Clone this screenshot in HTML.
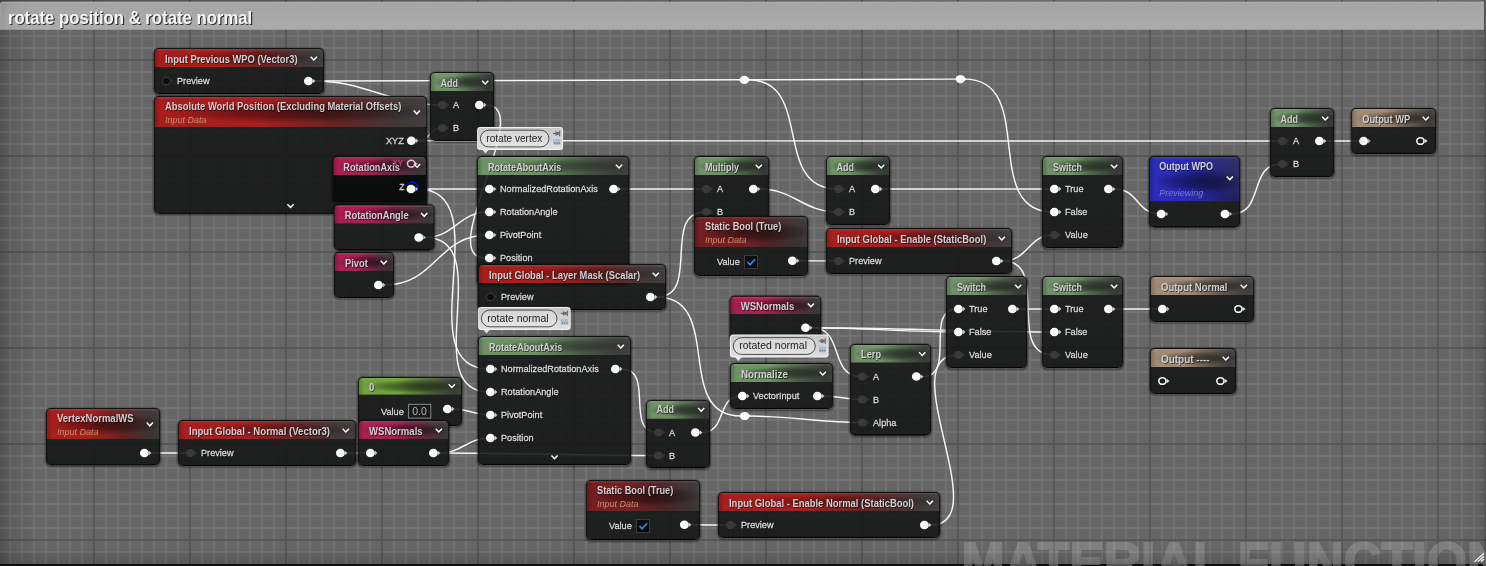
<!DOCTYPE html>
<html lang="en"><head><meta charset="utf-8"><title>rotate position &amp; rotate normal</title>
<style>
html,body{margin:0;padding:0;background:#666;overflow:hidden}
body{width:1486px;height:566px;position:relative}
svg{position:absolute;left:0;top:0;display:block;will-change:transform}
text{font-family:"Liberation Sans",sans-serif;white-space:pre}
</style></head><body>
<svg width="1486" height="566" viewBox="0 0 1486 566">
<defs>
<pattern id="minor" x="9" y="11" width="12" height="12" patternUnits="userSpaceOnUse">
<rect x="0" y="0" width="12" height="12" fill="#666666"/>
<rect x="0" y="0" width="2" height="12" fill="#727272"/><rect x="0" y="0" width="12" height="2" fill="#727272"/>
</pattern>
<pattern id="major" x="93" y="59" width="96" height="96" patternUnits="userSpaceOnUse">
<rect x="0" y="0" width="2" height="96" fill="#565656"/><rect x="0" y="0" width="96" height="2" fill="#565656"/>
</pattern>
<filter id="noop" x="0" y="0" width="1486" height="566" filterUnits="userSpaceOnUse"><feOffset dx="0" dy="0"/></filter>
<linearGradient id="bodyg" x1="0" y1="0" x2="0" y2="1"><stop offset="0" stop-color="#151716" stop-opacity="0.87"/><stop offset="1" stop-color="#121413" stop-opacity="0.87"/></linearGradient>
<linearGradient id="hdrshade" x1="0" y1="0" x2="0" y2="1"><stop offset="0" stop-color="#fff" stop-opacity="0.07"/><stop offset="0.45" stop-color="#000" stop-opacity="0"/><stop offset="1" stop-color="#000" stop-opacity="0.2"/></linearGradient>
<linearGradient id="hdrleft" x1="0" y1="0" x2="1" y2="0"><stop offset="0" stop-color="#000" stop-opacity="0.25"/><stop offset="1" stop-color="#000" stop-opacity="0"/></linearGradient>
<linearGradient id="leftv" x1="0" y1="0" x2="1" y2="0"><stop offset="0" stop-color="#000" stop-opacity="0.2"/><stop offset="0.3" stop-color="#000" stop-opacity="0.08"/><stop offset="1" stop-color="#000" stop-opacity="0"/></linearGradient>
<linearGradient id="topv" x1="0" y1="0" x2="1" y2="0"><stop offset="0" stop-color="#000" stop-opacity="0.3"/><stop offset="0.5" stop-color="#000" stop-opacity="0.12"/><stop offset="1" stop-color="#000" stop-opacity="0.03"/></linearGradient>
<linearGradient id="rightv" x1="0" y1="0" x2="1" y2="0"><stop offset="0" stop-color="#000" stop-opacity="0"/><stop offset="1" stop-color="#000" stop-opacity="0.08"/></linearGradient>
<linearGradient id="bubg" x1="0" y1="0" x2="0" y2="1"><stop offset="0" stop-color="#c6c6c6"/><stop offset="1" stop-color="#e0e0e0"/></linearGradient>
<linearGradient id="botv" x1="0" y1="0" x2="0" y2="1"><stop offset="0" stop-color="#000" stop-opacity="0"/><stop offset="1" stop-color="#000" stop-opacity="0.14"/></linearGradient>
<linearGradient id="titleg" x1="0" y1="0" x2="0" y2="1"><stop offset="0" stop-color="#a4a4a4"/><stop offset="1" stop-color="#acacac"/></linearGradient>
</defs>
<g filter="url(#noop)">
<rect width="1486" height="566" fill="url(#minor)"/>
<rect width="1486" height="566" fill="url(#major)"/>
<rect x="0" y="0" width="40" height="566" fill="url(#leftv)"/>
<rect x="1456" y="0" width="30" height="566" fill="url(#rightv)"/>

<g opacity="0.17"><text x="961.4" y="579.6" font-size="54.5" font-weight="bold" fill="#fff" stroke="#fff" stroke-width="1.9" stroke-linejoin="miter" textLength="543" lengthAdjust="spacingAndGlyphs">MATERIAL FUNCTION</text></g>
<rect x="0" y="548" width="1486" height="16" fill="url(#botv)"/>
<rect x="0" y="563.9" width="1486" height="3" fill="#0e0e0e"/>
<clipPath id="botc"><rect x="0" y="563.9" width="1486" height="3"/></clipPath>
<g clip-path="url(#botc)"><text x="961.4" y="579.6" font-size="54.5" font-weight="bold" fill="#525252" stroke="#525252" stroke-width="1.9" stroke-linejoin="miter" textLength="543" lengthAdjust="spacingAndGlyphs">MATERIAL FUNCTION</text></g>
<rect x="1484" y="0" width="2" height="563.9" fill="#000" opacity="0.13"/>
<rect x="0" y="0" width="1486" height="1.7" fill="url(#topv)"/>
<path d="M0 29.8 V3.7 Q0 1.7 2 1.7 H1484 V29.8Z" fill="url(#titleg)"/>
<rect x="2" y="1.7" width="1482" height="1" fill="#b8b8b8" opacity="0.6"/>
<rect x="0" y="3.5" width="1" height="26.3" fill="#b0b0b0"/>
<rect x="0" y="1.7" width="30" height="28.1" fill="url(#leftv)" opacity="0.5"/>
<text x="9.0" y="24.7" font-size="18.6" font-weight="bold" fill="#262626" opacity="0.9" textLength="244.3" lengthAdjust="spacingAndGlyphs">rotate position &amp; rotate normal</text>
<text x="7.9" y="23.7" font-size="18.6" font-weight="bold" fill="#f4f4f4" textLength="244.3" lengthAdjust="spacingAndGlyphs">rotate position &amp; rotate normal</text>
<path d="M315.0 81.0 C457.2 81.0 598.1 79.8 740.3 79.8" stroke="#f6f6f6" stroke-width="1.45" fill="none"/>
<path d="M748.3 79.8 C817.9 79.8 886.8 79.1 956.4 79.1" stroke="#f6f6f6" stroke-width="1.45" fill="none"/>
<path d="M748.3 79.8 C814.3 79.8 771.2 189.0 837.2 189.0" stroke="#f6f6f6" stroke-width="1.45" fill="none"/>
<path d="M964.4 79.1 C1038.3 79.1 979.3 212.0 1053.2 212.0" stroke="#f6f6f6" stroke-width="1.45" fill="none"/>
<path d="M315.0 81.0 C365.1 81.0 391.1 105.0 441.2 105.0" stroke="#f6f6f6" stroke-width="1.45" fill="none"/>
<path d="M418.0 140.8 C430.0 140.8 429.2 128.0 441.2 128.0" stroke="#f6f6f6" stroke-width="1.45" fill="none"/>
<path d="M418.0 140.8 C705.8 140.8 993.4 141.0 1281.2 141.0" stroke="#f6f6f6" stroke-width="1.45" fill="none"/>
<path d="M485.8 105.0 C537.0 105.0 434.0 258.0 485.2 258.0" stroke="#f6f6f6" stroke-width="1.45" fill="none"/>
<path d="M417.6 189.0 L488.2 189.0" stroke="#f6f6f6" stroke-width="1.45" fill="none"/>
<path d="M417.6 189.0 C501.5 189.0 405.3 369.0 489.2 369.0" stroke="#f6f6f6" stroke-width="1.45" fill="none"/>
<path d="M425.4 237.4 C454.8 237.4 458.8 212.0 488.2 212.0" stroke="#f6f6f6" stroke-width="1.45" fill="none"/>
<path d="M425.4 237.4 C498.2 237.4 416.4 392.0 489.2 392.0" stroke="#f6f6f6" stroke-width="1.45" fill="none"/>
<path d="M385.0 285.0 C436.1 285.0 437.1 235.0 488.2 235.0" stroke="#f6f6f6" stroke-width="1.45" fill="none"/>
<path d="M454.0 409.0 C467.7 409.0 475.5 415.0 489.2 415.0" stroke="#f6f6f6" stroke-width="1.45" fill="none"/>
<path d="M440.0 453.0 C461.4 453.0 467.8 438.0 489.2 438.0" stroke="#f6f6f6" stroke-width="1.45" fill="none"/>
<path d="M440.0 453.0 C513.2 453.0 584.0 455.5 657.2 455.5" stroke="#f6f6f6" stroke-width="1.45" fill="none"/>
<path d="M347.0 453.0 L369.2 453.0" stroke="#f6f6f6" stroke-width="1.45" fill="none"/>
<path d="M151.0 453.0 L189.2 453.0" stroke="#f6f6f6" stroke-width="1.45" fill="none"/>
<path d="M620.2 189.0 L705.2 189.0" stroke="#f6f6f6" stroke-width="1.45" fill="none"/>
<path d="M657.0 297.0 C701.4 297.0 660.8 212.0 705.2 212.0" stroke="#f6f6f6" stroke-width="1.45" fill="none"/>
<path d="M657.0 297.0 C724.5 297.0 673.1 416.0 740.6 416.0" stroke="#f6f6f6" stroke-width="1.45" fill="none"/>
<path d="M748.6 416.0 C788.3 416.0 821.5 422.6 861.2 422.6" stroke="#f6f6f6" stroke-width="1.45" fill="none"/>
<path d="M760.0 189.0 C793.4 189.0 803.8 212.0 837.2 212.0" stroke="#f6f6f6" stroke-width="1.45" fill="none"/>
<path d="M799.0 260.8 C811.8 260.8 824.4 261.0 837.2 261.0" stroke="#f6f6f6" stroke-width="1.45" fill="none"/>
<path d="M882.0 189.0 L1053.2 189.0" stroke="#f6f6f6" stroke-width="1.45" fill="none"/>
<path d="M1003.0 261.0 C1028.4 261.0 1027.8 235.0 1053.2 235.0" stroke="#f6f6f6" stroke-width="1.45" fill="none"/>
<path d="M1003.0 261.0 C1051.1 261.0 1005.1 355.0 1053.2 355.0" stroke="#f6f6f6" stroke-width="1.45" fill="none"/>
<path d="M1115.0 189.0 C1138.3 189.0 1136.7 214.0 1160.0 214.0" stroke="#f6f6f6" stroke-width="1.45" fill="none"/>
<path d="M1231.6 214.0 C1264.8 214.0 1248.0 164.0 1281.2 164.0" stroke="#f6f6f6" stroke-width="1.45" fill="none"/>
<path d="M1326.0 141.0 L1362.4 141.0" stroke="#f6f6f6" stroke-width="1.45" fill="none"/>
<path d="M622.0 369.0 C654.9 369.0 624.3 432.5 657.2 432.5" stroke="#f6f6f6" stroke-width="1.45" fill="none"/>
<path d="M702.0 432.5 C727.2 432.5 716.0 396.0 741.2 396.0" stroke="#f6f6f6" stroke-width="1.45" fill="none"/>
<path d="M824.0 396.0 C837.6 396.0 847.6 399.6 861.2 399.6" stroke="#f6f6f6" stroke-width="1.45" fill="none"/>
<path d="M812.1 327.8 C844.7 327.8 828.6 376.6 861.2 376.6" stroke="#f6f6f6" stroke-width="1.45" fill="none"/>
<path d="M812.1 327.8 C861.9 327.8 907.4 332.0 957.2 332.0" stroke="#f6f6f6" stroke-width="1.45" fill="none"/>
<path d="M812.1 327.8 C893.9 327.8 971.4 332.0 1053.2 332.0" stroke="#f6f6f6" stroke-width="1.45" fill="none"/>
<path d="M923.0 376.6 C956.9 376.6 923.3 309.0 957.2 309.0" stroke="#f6f6f6" stroke-width="1.45" fill="none"/>
<path d="M1019.0 309.0 L1053.2 309.0" stroke="#f6f6f6" stroke-width="1.45" fill="none"/>
<path d="M1115.0 309.0 L1161.2 309.0" stroke="#f6f6f6" stroke-width="1.45" fill="none"/>
<path d="M931.0 525.0 C996.4 525.0 891.8 355.0 957.2 355.0" stroke="#f6f6f6" stroke-width="1.45" fill="none"/>
<path d="M691.0 524.8 C703.8 524.8 716.4 525.0 729.2 525.0" stroke="#f6f6f6" stroke-width="1.45" fill="none"/>
<path d="M748.10 77.60 L750.50 79.80 L748.10 82.00Z" fill="#f0f0f0"/>
<ellipse cx="744.3" cy="79.8" rx="4.7" ry="4.1" fill="#fbfbfb"/>
<path d="M964.20 76.90 L966.60 79.10 L964.20 81.30Z" fill="#f0f0f0"/>
<ellipse cx="960.4" cy="79.1" rx="4.7" ry="4.1" fill="#fbfbfb"/>
<path d="M748.40 413.80 L750.80 416.00 L748.40 418.20Z" fill="#f0f0f0"/>
<ellipse cx="744.6" cy="416.0" rx="4.7" ry="4.1" fill="#fbfbfb"/>
<g>
<rect x="153.1" y="95.6" width="274.8" height="120.1" rx="6.0" fill="none" stroke="#000" stroke-width="1.8" opacity="0.18"/>
<rect x="153.9" y="96.3" width="273.2" height="118.3" rx="5.3" fill="none" stroke="#000" stroke-width="1.3" opacity="0.3"/>
<rect x="154.675" y="96.675" width="271.65" height="116.45" rx="4.325" fill="none" stroke="#101010" stroke-opacity="0.96" stroke-width="1.35"/>
<path d="M159.00 213.25 H422.00" stroke="#000" stroke-width="1.1" opacity="0.75"/>
<clipPath id="g1c"><rect x="154.90" y="96.90" width="271.20" height="116.00" rx="4.10"/></clipPath>
<g clip-path="url(#g1c)">
<rect x="154" y="96" width="273" height="117.8" fill="url(#bodyg)"/>
<linearGradient id="g1h" gradientUnits="userSpaceOnUse" x1="154" y1="0" x2="427" y2="0"><stop offset="0" stop-color="#a61e1e"/><stop offset="0.38" stop-color="#a61e1e"/><stop offset="0.92" stop-color="#2f2828"/></linearGradient>
<linearGradient id="g1s" gradientUnits="userSpaceOnUse" x1="249.6" y1="133.0" x2="427.0" y2="92.0"><stop offset="0" stop-color="#fff" stop-opacity="0"/><stop offset="0.45" stop-color="#fff" stop-opacity="0"/><stop offset="1" stop-color="#fff" stop-opacity="0.11"/></linearGradient>
<rect x="154" y="96" width="273" height="31" fill="url(#g1h)"/>
<rect x="154" y="96" width="273" height="31" fill="url(#g1s)"/>
<radialGradient id="g1b" gradientUnits="userSpaceOnUse" cx="0" cy="0" r="1" gradientTransform="translate(304.1 112.1) scale(136.5 11.16)"><stop offset="0" stop-color="#000" stop-opacity="0.48"/><stop offset="0.5" stop-color="#000" stop-opacity="0.336"/><stop offset="1" stop-color="#000" stop-opacity="0"/></radialGradient>
<rect x="154" y="96" width="273" height="31" fill="url(#g1b)"/>
<rect x="154" y="96" width="6" height="31" fill="url(#hdrleft)"/>
<rect x="154" y="97.35" width="273" height="1.1" fill="#fff" opacity="0.13"/>
</g>
<text x="165.70" y="111.20" font-size="10.7" textLength="236.30" lengthAdjust="spacingAndGlyphs" font-weight="bold" fill="#000" opacity="0.55">Absolute World Position (Excluding Material Offsets)</text>
<text x="165.00" y="110.40" font-size="10.7" textLength="236.30" lengthAdjust="spacingAndGlyphs" font-weight="bold" fill="#d0d0d0">Absolute World Position (Excluding Material Offsets)</text>
<text x="165.00" y="123.30" font-size="9.2" textLength="41.60" lengthAdjust="spacingAndGlyphs" font-style="italic" fill="#c88e6c">Input Data</text>
<path d="M413.70 110.60 L416.80 113.80 L419.90 110.60" fill="none" stroke="#fff" stroke-width="1.5" stroke-linecap="butt" stroke-linejoin="miter"/>
<path d="M287.40 204.20 L290.50 207.40 L293.60 204.20" fill="none" stroke="#fff" stroke-width="1.5" stroke-linecap="butt" stroke-linejoin="miter"/>
<path d="M416.00 138.60 L418.40 140.80 L416.00 143.00Z" fill="#e8e8e8" opacity="0.85"/>
<ellipse cx="411.40" cy="140.80" rx="4.45" ry="4.25" fill="#fcfcfc"/>
<text x="386.68" y="144.80" font-size="9.8" textLength="17.82" lengthAdjust="spacingAndGlyphs" fill="#000" opacity="0.55">XYZ</text>
<text x="385.98" y="144.00" font-size="9.8" textLength="17.82" lengthAdjust="spacingAndGlyphs" fill="#dadada" stroke="#dadada" stroke-width="0.28">XYZ</text>
</g>
<g>
<rect x="153.1" y="47.6" width="171.8" height="48.3" rx="6.0" fill="none" stroke="#000" stroke-width="1.8" opacity="0.18"/>
<rect x="153.9" y="48.3" width="170.2" height="46.5" rx="5.3" fill="none" stroke="#000" stroke-width="1.3" opacity="0.3"/>
<rect x="154.675" y="48.675" width="168.65" height="44.65" rx="4.325" fill="none" stroke="#101010" stroke-opacity="0.96" stroke-width="1.35"/>
<path d="M159.00 93.45 H319.00" stroke="#000" stroke-width="1.1" opacity="0.75"/>
<clipPath id="g2c"><rect x="154.90" y="48.90" width="168.20" height="44.20" rx="4.10"/></clipPath>
<g clip-path="url(#g2c)">
<rect x="154" y="48" width="170" height="46" fill="url(#bodyg)"/>
<linearGradient id="g2h" gradientUnits="userSpaceOnUse" x1="154" y1="0" x2="324" y2="0"><stop offset="0" stop-color="#a61e1e"/><stop offset="0.38" stop-color="#a61e1e"/><stop offset="0.92" stop-color="#2f2828"/></linearGradient>
<linearGradient id="g2s" gradientUnits="userSpaceOnUse" x1="213.5" y1="73.0" x2="324.0" y2="44.0"><stop offset="0" stop-color="#fff" stop-opacity="0"/><stop offset="0.45" stop-color="#fff" stop-opacity="0"/><stop offset="1" stop-color="#fff" stop-opacity="0.11"/></linearGradient>
<rect x="154" y="48" width="170" height="19.0" fill="url(#g2h)"/>
<rect x="154" y="48" width="170" height="19.0" fill="url(#g2s)"/>
<radialGradient id="g2b" gradientUnits="userSpaceOnUse" cx="0" cy="0" r="1" gradientTransform="translate(247.5 58.1) scale(85.0 6.84)"><stop offset="0" stop-color="#000" stop-opacity="0.32"/><stop offset="0.5" stop-color="#000" stop-opacity="0.224"/><stop offset="1" stop-color="#000" stop-opacity="0"/></radialGradient>
<rect x="154" y="48" width="170" height="19.0" fill="url(#g2b)"/>
<rect x="154" y="48" width="6" height="19.0" fill="url(#hdrleft)"/>
<rect x="154" y="49.35" width="170" height="1.1" fill="#fff" opacity="0.13"/>
</g>
<text x="165.70" y="63.70" font-size="10.7" textLength="132.50" lengthAdjust="spacingAndGlyphs" font-weight="bold" fill="#000" opacity="0.55">Input Previous WPO (Vector3)</text>
<text x="165.00" y="62.90" font-size="10.7" textLength="132.50" lengthAdjust="spacingAndGlyphs" font-weight="bold" fill="#d0d0d0">Input Previous WPO (Vector3)</text>
<path d="M310.70 56.70 L313.80 59.90 L316.90 56.70" fill="none" stroke="#fff" stroke-width="1.5" stroke-linecap="butt" stroke-linejoin="miter"/>
<path d="M170.70 78.70 L173.40 81.00 L170.70 83.30Z" fill="#2c2c2c"/>
<ellipse cx="166.40" cy="81.00" rx="3.9" ry="3.6" fill="#0c0c0c" stroke="#383838" stroke-width="1.1"/>
<text x="177.70" y="85.00" font-size="9.8" textLength="32.59" lengthAdjust="spacingAndGlyphs" fill="#000" opacity="0.55">Preview</text>
<text x="177.00" y="84.20" font-size="9.8" textLength="32.59" lengthAdjust="spacingAndGlyphs" fill="#dadada" stroke="#dadada" stroke-width="0.28">Preview</text>
<path d="M313.00 78.80 L315.40 81.00 L313.00 83.20Z" fill="#e8e8e8" opacity="0.85"/>
<ellipse cx="308.40" cy="81.00" rx="4.45" ry="4.25" fill="#fcfcfc"/>
</g>
<g>
<rect x="331.70000000000005" y="155.6" width="95.8" height="48.3" rx="6.0" fill="none" stroke="#000" stroke-width="1.8" opacity="0.18"/>
<rect x="332.5" y="156.3" width="94.2" height="46.5" rx="5.3" fill="none" stroke="#000" stroke-width="1.3" opacity="0.3"/>
<rect x="333.27500000000003" y="156.675" width="92.65" height="44.65" rx="4.325" fill="none" stroke="#101010" stroke-opacity="0.96" stroke-width="1.35"/>
<path d="M337.60 201.45 H421.60" stroke="#000" stroke-width="1.1" opacity="0.75"/>
<clipPath id="g3c"><rect x="333.50" y="156.90" width="92.20" height="44.20" rx="4.10"/></clipPath>
<g clip-path="url(#g3c)">
<rect x="332.6" y="156" width="94" height="46" fill="url(#bodyg)"/>
<linearGradient id="g3h" gradientUnits="userSpaceOnUse" x1="332.6" y1="0" x2="426.6" y2="0"><stop offset="0" stop-color="#a81f52"/><stop offset="0.38" stop-color="#a81f52"/><stop offset="0.92" stop-color="#2f282b"/></linearGradient>
<linearGradient id="g3s" gradientUnits="userSpaceOnUse" x1="365.5" y1="181.0" x2="426.6" y2="152.0"><stop offset="0" stop-color="#fff" stop-opacity="0"/><stop offset="0.45" stop-color="#fff" stop-opacity="0"/><stop offset="1" stop-color="#fff" stop-opacity="0.11"/></linearGradient>
<rect x="332.6" y="156" width="94" height="19.0" fill="url(#g3h)"/>
<rect x="332.6" y="156" width="94" height="19.0" fill="url(#g3s)"/>
<radialGradient id="g3b" gradientUnits="userSpaceOnUse" cx="0" cy="0" r="1" gradientTransform="translate(384.3 166.1) scale(47.0 6.84)"><stop offset="0" stop-color="#000" stop-opacity="0.48"/><stop offset="0.5" stop-color="#000" stop-opacity="0.336"/><stop offset="1" stop-color="#000" stop-opacity="0"/></radialGradient>
<rect x="332.6" y="156" width="94" height="19.0" fill="url(#g3b)"/>
<rect x="332.6" y="156" width="6" height="19.0" fill="url(#hdrleft)"/>
<rect x="332.6" y="157.35" width="94" height="1.1" fill="#fff" opacity="0.13"/>
</g>
<text x="344.00" y="171.70" font-size="10.7" textLength="56.50" lengthAdjust="spacingAndGlyphs" font-weight="bold" fill="#000" opacity="0.55">RotationAxis</text>
<text x="343.30" y="170.90" font-size="10.7" textLength="56.50" lengthAdjust="spacingAndGlyphs" font-weight="bold" fill="#d0d0d0">RotationAxis</text>
<path d="M414.00 164.00 L417.10 167.20 L420.20 164.00" fill="none" stroke="#fff" stroke-width="1.5" stroke-linecap="butt" stroke-linejoin="miter"/>
<rect x="333.90000000000003" y="175" width="91.4" height="25.7" fill="#000" opacity="0.45"/>
<circle cx="412.7" cy="186.9" r="4.7" fill="none" stroke="#0a0ad8" stroke-width="1.7"/>
<path d="M415.60 186.80 L418.00 189.00 L415.60 191.20Z" fill="#e8e8e8" opacity="0.85"/>
<ellipse cx="411.00" cy="189.00" rx="4.45" ry="4.25" fill="#fcfcfc"/>
<text x="392.40" y="166.20" font-size="9.8" textLength="10.60" lengthAdjust="spacingAndGlyphs" fill="#d0508c" opacity="0.85" stroke="#d0508c" stroke-width="0.28">XY</text>
<ellipse cx="411.2" cy="163.7" rx="3.7" ry="3.4" fill="none" stroke="#ecc0d4" stroke-width="1.5"/>
<path d="M414.6 161.6 L417.6 163.7 L414.6 165.8Z" fill="#ecc0d4"/>
<text x="399.90" y="191.00" font-size="9.8" textLength="5.20" lengthAdjust="spacingAndGlyphs" fill="#000" opacity="0.55">Z</text>
<text x="399.20" y="190.20" font-size="9.8" textLength="5.20" lengthAdjust="spacingAndGlyphs" fill="#dadada" stroke="#dadada" stroke-width="0.28">Z</text>
</g>
<g>
<rect x="332.90000000000003" y="204.0" width="102.39999999999999" height="48.3" rx="6.0" fill="none" stroke="#000" stroke-width="1.8" opacity="0.18"/>
<rect x="333.7" y="204.70000000000002" width="100.8" height="46.5" rx="5.3" fill="none" stroke="#000" stroke-width="1.3" opacity="0.3"/>
<rect x="334.475" y="205.07500000000002" width="99.25" height="44.65" rx="4.325" fill="none" stroke="#101010" stroke-opacity="0.96" stroke-width="1.35"/>
<path d="M338.80 249.85 H429.40" stroke="#000" stroke-width="1.1" opacity="0.75"/>
<clipPath id="g4c"><rect x="334.70" y="205.30" width="98.80" height="44.20" rx="4.10"/></clipPath>
<g clip-path="url(#g4c)">
<rect x="333.8" y="204.4" width="100.6" height="46" fill="url(#bodyg)"/>
<linearGradient id="g4h" gradientUnits="userSpaceOnUse" x1="333.8" y1="0" x2="434.4" y2="0"><stop offset="0" stop-color="#a81f52"/><stop offset="0.38" stop-color="#a81f52"/><stop offset="0.92" stop-color="#2f282b"/></linearGradient>
<linearGradient id="g4s" gradientUnits="userSpaceOnUse" x1="369.0" y1="229.4" x2="434.4" y2="200.4"><stop offset="0" stop-color="#fff" stop-opacity="0"/><stop offset="0.45" stop-color="#fff" stop-opacity="0"/><stop offset="1" stop-color="#fff" stop-opacity="0.11"/></linearGradient>
<rect x="333.8" y="204.4" width="100.6" height="19.0" fill="url(#g4h)"/>
<rect x="333.8" y="204.4" width="100.6" height="19.0" fill="url(#g4s)"/>
<radialGradient id="g4b" gradientUnits="userSpaceOnUse" cx="0" cy="0" r="1" gradientTransform="translate(389.1 214.5) scale(50.3 6.84)"><stop offset="0" stop-color="#000" stop-opacity="0.48"/><stop offset="0.5" stop-color="#000" stop-opacity="0.336"/><stop offset="1" stop-color="#000" stop-opacity="0"/></radialGradient>
<rect x="333.8" y="204.4" width="100.6" height="19.0" fill="url(#g4b)"/>
<rect x="333.8" y="204.4" width="6" height="19.0" fill="url(#hdrleft)"/>
<rect x="333.8" y="205.75" width="100.6" height="1.1" fill="#fff" opacity="0.13"/>
</g>
<text x="345.50" y="220.10" font-size="10.7" textLength="63.80" lengthAdjust="spacingAndGlyphs" font-weight="bold" fill="#000" opacity="0.55">RotationAngle</text>
<text x="344.80" y="219.30" font-size="10.7" textLength="63.80" lengthAdjust="spacingAndGlyphs" font-weight="bold" fill="#d0d0d0">RotationAngle</text>
<path d="M421.10 213.10 L424.20 216.30 L427.30 213.10" fill="none" stroke="#fff" stroke-width="1.5" stroke-linecap="butt" stroke-linejoin="miter"/>
<path d="M423.40 235.20 L425.80 237.40 L423.40 239.60Z" fill="#e8e8e8" opacity="0.85"/>
<ellipse cx="418.80" cy="237.40" rx="4.45" ry="4.25" fill="#fcfcfc"/>
</g>
<g>
<rect x="333.1" y="251.6" width="61.8" height="48.3" rx="6.0" fill="none" stroke="#000" stroke-width="1.8" opacity="0.18"/>
<rect x="333.9" y="252.3" width="60.2" height="46.5" rx="5.3" fill="none" stroke="#000" stroke-width="1.3" opacity="0.3"/>
<rect x="334.675" y="252.675" width="58.65" height="44.65" rx="4.325" fill="none" stroke="#101010" stroke-opacity="0.96" stroke-width="1.35"/>
<path d="M339.00 297.45 H389.00" stroke="#000" stroke-width="1.1" opacity="0.75"/>
<clipPath id="g5c"><rect x="334.90" y="252.90" width="58.20" height="44.20" rx="4.10"/></clipPath>
<g clip-path="url(#g5c)">
<rect x="334" y="252" width="60" height="46" fill="url(#bodyg)"/>
<linearGradient id="g5h" gradientUnits="userSpaceOnUse" x1="334" y1="0" x2="394" y2="0"><stop offset="0" stop-color="#a81f52"/><stop offset="0.38" stop-color="#a81f52"/><stop offset="0.92" stop-color="#2f282b"/></linearGradient>
<linearGradient id="g5s" gradientUnits="userSpaceOnUse" x1="355.0" y1="277.0" x2="394.0" y2="248.0"><stop offset="0" stop-color="#fff" stop-opacity="0"/><stop offset="0.45" stop-color="#fff" stop-opacity="0"/><stop offset="1" stop-color="#fff" stop-opacity="0.11"/></linearGradient>
<rect x="334" y="252" width="60" height="19.0" fill="url(#g5h)"/>
<rect x="334" y="252" width="60" height="19.0" fill="url(#g5s)"/>
<radialGradient id="g5b" gradientUnits="userSpaceOnUse" cx="0" cy="0" r="1" gradientTransform="translate(367.0 262.1) scale(30.0 6.84)"><stop offset="0" stop-color="#000" stop-opacity="0.48"/><stop offset="0.5" stop-color="#000" stop-opacity="0.336"/><stop offset="1" stop-color="#000" stop-opacity="0"/></radialGradient>
<rect x="334" y="252" width="60" height="19.0" fill="url(#g5b)"/>
<rect x="334" y="252" width="6" height="19.0" fill="url(#hdrleft)"/>
<rect x="334" y="253.35" width="60" height="1.1" fill="#fff" opacity="0.13"/>
</g>
<text x="345.70" y="267.70" font-size="10.7" textLength="22.90" lengthAdjust="spacingAndGlyphs" font-weight="bold" fill="#000" opacity="0.55">Pivot</text>
<text x="345.00" y="266.90" font-size="10.7" textLength="22.90" lengthAdjust="spacingAndGlyphs" font-weight="bold" fill="#d0d0d0">Pivot</text>
<path d="M380.70 260.70 L383.80 263.90 L386.90 260.70" fill="none" stroke="#fff" stroke-width="1.5" stroke-linecap="butt" stroke-linejoin="miter"/>
<path d="M383.00 282.80 L385.40 285.00 L383.00 287.20Z" fill="#e8e8e8" opacity="0.85"/>
<ellipse cx="378.40" cy="285.00" rx="4.45" ry="4.25" fill="#fcfcfc"/>
</g>
<g>
<rect x="429.1" y="71.6" width="65.8" height="71.3" rx="6.0" fill="none" stroke="#000" stroke-width="1.8" opacity="0.18"/>
<rect x="429.9" y="72.3" width="64.2" height="69.5" rx="5.3" fill="none" stroke="#000" stroke-width="1.3" opacity="0.3"/>
<rect x="430.675" y="72.675" width="62.65" height="67.65" rx="4.325" fill="none" stroke="#101010" stroke-opacity="0.96" stroke-width="1.35"/>
<path d="M435.00 140.45 H489.00" stroke="#000" stroke-width="1.1" opacity="0.75"/>
<clipPath id="g6c"><rect x="430.90" y="72.90" width="62.20" height="67.20" rx="4.10"/></clipPath>
<g clip-path="url(#g6c)">
<rect x="430" y="72" width="64" height="69" fill="url(#bodyg)"/>
<linearGradient id="g6h" gradientUnits="userSpaceOnUse" x1="430" y1="0" x2="494" y2="0"><stop offset="0" stop-color="#6e9167"/><stop offset="0.38" stop-color="#6e9167"/><stop offset="0.92" stop-color="#2a2e2a"/></linearGradient>
<linearGradient id="g6s" gradientUnits="userSpaceOnUse" x1="452.4" y1="97.0" x2="494.0" y2="68.0"><stop offset="0" stop-color="#fff" stop-opacity="0"/><stop offset="0.45" stop-color="#fff" stop-opacity="0"/><stop offset="1" stop-color="#fff" stop-opacity="0.11"/></linearGradient>
<rect x="430" y="72" width="64" height="19.0" fill="url(#g6h)"/>
<rect x="430" y="72" width="64" height="19.0" fill="url(#g6s)"/>
<radialGradient id="g6b" gradientUnits="userSpaceOnUse" cx="0" cy="0" r="1" gradientTransform="translate(465.2 82.1) scale(32.0 6.84)"><stop offset="0" stop-color="#000" stop-opacity="0.48"/><stop offset="0.5" stop-color="#000" stop-opacity="0.336"/><stop offset="1" stop-color="#000" stop-opacity="0"/></radialGradient>
<rect x="430" y="72" width="64" height="19.0" fill="url(#g6b)"/>
<rect x="430" y="72" width="6" height="19.0" fill="url(#hdrleft)"/>
<rect x="430" y="73.35" width="64" height="1.1" fill="#fff" opacity="0.13"/>
</g>
<text x="441.10" y="87.70" font-size="10.7" textLength="17.50" lengthAdjust="spacingAndGlyphs" font-weight="bold" fill="#000" opacity="0.55">Add</text>
<text x="440.40" y="86.90" font-size="10.7" textLength="17.50" lengthAdjust="spacingAndGlyphs" font-weight="bold" fill="#d0d0d0">Add</text>
<path d="M482.10 80.70 L485.20 83.90 L488.30 80.70" fill="none" stroke="#fff" stroke-width="1.5" stroke-linecap="butt" stroke-linejoin="miter"/>
<path d="M446.70 102.70 L449.40 105.00 L446.70 107.30Z" fill="#333"/>
<ellipse cx="442.40" cy="105.00" rx="4.4" ry="4" fill="#3a3a3a"/>
<text x="453.70" y="109.00" font-size="9.8" textLength="6.11" lengthAdjust="spacingAndGlyphs" fill="#000" opacity="0.55">A</text>
<text x="453.00" y="108.20" font-size="9.8" textLength="6.11" lengthAdjust="spacingAndGlyphs" fill="#dadada" stroke="#dadada" stroke-width="0.28">A</text>
<path d="M446.70 125.70 L449.40 128.00 L446.70 130.30Z" fill="#333"/>
<ellipse cx="442.40" cy="128.00" rx="4.4" ry="4" fill="#3a3a3a"/>
<text x="453.70" y="132.00" font-size="9.8" textLength="6.11" lengthAdjust="spacingAndGlyphs" fill="#000" opacity="0.55">B</text>
<text x="453.00" y="131.20" font-size="9.8" textLength="6.11" lengthAdjust="spacingAndGlyphs" fill="#dadada" stroke="#dadada" stroke-width="0.28">B</text>
<path d="M484.00 102.80 L486.40 105.00 L484.00 107.20Z" fill="#e8e8e8" opacity="0.85"/>
<ellipse cx="479.40" cy="105.00" rx="4.45" ry="4.25" fill="#fcfcfc"/>
</g>
<g>
<rect x="476.1" y="155.6" width="154.0" height="131.3" rx="6.0" fill="none" stroke="#000" stroke-width="1.8" opacity="0.18"/>
<rect x="476.9" y="156.3" width="152.39999999999998" height="129.5" rx="5.3" fill="none" stroke="#000" stroke-width="1.3" opacity="0.3"/>
<rect x="477.675" y="156.675" width="150.85" height="127.65" rx="4.325" fill="none" stroke="#101010" stroke-opacity="0.96" stroke-width="1.35"/>
<path d="M482.00 284.45 H624.20" stroke="#000" stroke-width="1.1" opacity="0.75"/>
<clipPath id="g7c"><rect x="477.90" y="156.90" width="150.40" height="127.20" rx="4.10"/></clipPath>
<g clip-path="url(#g7c)">
<rect x="477" y="156" width="152.2" height="129" fill="url(#bodyg)"/>
<linearGradient id="g7h" gradientUnits="userSpaceOnUse" x1="477" y1="0" x2="629.2" y2="0"><stop offset="0" stop-color="#6e9167"/><stop offset="0.38" stop-color="#6e9167"/><stop offset="0.92" stop-color="#2a2e2a"/></linearGradient>
<linearGradient id="g7s" gradientUnits="userSpaceOnUse" x1="530.3" y1="181.0" x2="629.2" y2="152.0"><stop offset="0" stop-color="#fff" stop-opacity="0"/><stop offset="0.45" stop-color="#fff" stop-opacity="0"/><stop offset="1" stop-color="#fff" stop-opacity="0.11"/></linearGradient>
<rect x="477" y="156" width="152.2" height="19.0" fill="url(#g7h)"/>
<rect x="477" y="156" width="152.2" height="19.0" fill="url(#g7s)"/>
<radialGradient id="g7b" gradientUnits="userSpaceOnUse" cx="0" cy="0" r="1" gradientTransform="translate(560.7 166.1) scale(76.1 6.84)"><stop offset="0" stop-color="#000" stop-opacity="0.32"/><stop offset="0.5" stop-color="#000" stop-opacity="0.224"/><stop offset="1" stop-color="#000" stop-opacity="0"/></radialGradient>
<rect x="477" y="156" width="152.2" height="19.0" fill="url(#g7b)"/>
<rect x="477" y="156" width="6" height="19.0" fill="url(#hdrleft)"/>
<rect x="477" y="157.35" width="152.2" height="1.1" fill="#fff" opacity="0.13"/>
</g>
<text x="488.70" y="171.70" font-size="10.7" textLength="73.40" lengthAdjust="spacingAndGlyphs" font-weight="bold" fill="#000" opacity="0.55">RotateAboutAxis</text>
<text x="488.00" y="170.90" font-size="10.7" textLength="73.40" lengthAdjust="spacingAndGlyphs" font-weight="bold" fill="#d0d0d0">RotateAboutAxis</text>
<path d="M615.90 164.70 L619.00 167.90 L622.10 164.70" fill="none" stroke="#fff" stroke-width="1.5" stroke-linecap="butt" stroke-linejoin="miter"/>
<path d="M494.00 186.80 L496.40 189.00 L494.00 191.20Z" fill="#e8e8e8" opacity="0.85"/>
<ellipse cx="489.40" cy="189.00" rx="4.45" ry="4.25" fill="#fcfcfc"/>
<text x="500.70" y="193.00" font-size="9.8" textLength="97.78" lengthAdjust="spacingAndGlyphs" fill="#000" opacity="0.55">NormalizedRotationAxis</text>
<text x="500.00" y="192.20" font-size="9.8" textLength="97.78" lengthAdjust="spacingAndGlyphs" fill="#dadada" stroke="#dadada" stroke-width="0.28">NormalizedRotationAxis</text>
<path d="M494.00 209.80 L496.40 212.00 L494.00 214.20Z" fill="#e8e8e8" opacity="0.85"/>
<ellipse cx="489.40" cy="212.00" rx="4.45" ry="4.25" fill="#fcfcfc"/>
<text x="500.70" y="216.00" font-size="9.8" textLength="57.57" lengthAdjust="spacingAndGlyphs" fill="#000" opacity="0.55">RotationAngle</text>
<text x="500.00" y="215.20" font-size="9.8" textLength="57.57" lengthAdjust="spacingAndGlyphs" fill="#dadada" stroke="#dadada" stroke-width="0.28">RotationAngle</text>
<path d="M494.00 232.80 L496.40 235.00 L494.00 237.20Z" fill="#e8e8e8" opacity="0.85"/>
<ellipse cx="489.40" cy="235.00" rx="4.45" ry="4.25" fill="#fcfcfc"/>
<text x="500.70" y="239.00" font-size="9.8" textLength="41.26" lengthAdjust="spacingAndGlyphs" fill="#000" opacity="0.55">PivotPoint</text>
<text x="500.00" y="238.20" font-size="9.8" textLength="41.26" lengthAdjust="spacingAndGlyphs" fill="#dadada" stroke="#dadada" stroke-width="0.28">PivotPoint</text>
<path d="M494.00 255.80 L496.40 258.00 L494.00 260.20Z" fill="#e8e8e8" opacity="0.85"/>
<ellipse cx="489.40" cy="258.00" rx="4.45" ry="4.25" fill="#fcfcfc"/>
<text x="500.70" y="262.00" font-size="9.8" textLength="32.60" lengthAdjust="spacingAndGlyphs" fill="#000" opacity="0.55">Position</text>
<text x="500.00" y="261.20" font-size="9.8" textLength="32.60" lengthAdjust="spacingAndGlyphs" fill="#dadada" stroke="#dadada" stroke-width="0.28">Position</text>
<path d="M618.20 186.80 L620.60 189.00 L618.20 191.20Z" fill="#e8e8e8" opacity="0.85"/>
<ellipse cx="613.60" cy="189.00" rx="4.45" ry="4.25" fill="#fcfcfc"/>
</g>
<g>
<path d="M482.10 149.50 L485.50 153.60 L488.90 149.50Z" fill="#e4e4e4"/>
<rect x="477.10" y="127.10" width="86" height="22.9" rx="3.2" fill="#f2f2f2"/>
<rect x="478.00" y="128.00" width="84.2" height="21.099999999999998" rx="2.4" fill="url(#bubg)"/>
<rect x="480.40" y="130.20" width="68.6" height="16.7" rx="8.35" fill="#fff" fill-opacity="0.22" stroke="#3c3c3c" stroke-width="0.9"/>
<text x="486.30" y="141.70" font-size="11.2" textLength="56.10" lengthAdjust="spacingAndGlyphs" fill="#1c1c1c">rotate vertex</text>
<path d="M553.10 133.50 h2.4 M559.70 130.70 v5.6" stroke="#5c5c5c" stroke-width="1" fill="none"/>
<path d="M555.30 131.30 L559.30 132.50 L559.30 134.50 L555.30 135.70Z" fill="#6a6a6a"/>
<rect x="553.10" y="139.10" width="7.4" height="5.8" fill="#aebdcc"/>
<path d="M554.10 143.10 h1.3 m1 0 h1.3 m1 0 h1.3" stroke="#5a6b7c" stroke-width="1.1" fill="none"/>
</g>
<clipPath id="bub1c"><rect x="478" y="128" width="84" height="21"/></clipPath>
<g clip-path="url(#bub1c)" opacity="0.4"><path d="M485.8 105.0 C537.0 105.0 434.0 258.0 485.2 258.0" stroke="#ffffff" stroke-width="1.45" fill="none"/></g>
<g>
<rect x="477.1" y="263.6" width="189.8" height="48.3" rx="6.0" fill="none" stroke="#000" stroke-width="1.8" opacity="0.18"/>
<rect x="477.9" y="264.3" width="188.2" height="46.5" rx="5.3" fill="none" stroke="#000" stroke-width="1.3" opacity="0.3"/>
<rect x="478.675" y="264.675" width="186.65" height="44.65" rx="4.325" fill="none" stroke="#101010" stroke-opacity="0.96" stroke-width="1.35"/>
<path d="M483.00 309.45 H661.00" stroke="#000" stroke-width="1.1" opacity="0.75"/>
<clipPath id="g8c"><rect x="478.90" y="264.90" width="186.20" height="44.20" rx="4.10"/></clipPath>
<g clip-path="url(#g8c)">
<rect x="478" y="264" width="188" height="46" fill="url(#bodyg)"/>
<linearGradient id="g8h" gradientUnits="userSpaceOnUse" x1="478" y1="0" x2="666" y2="0"><stop offset="0" stop-color="#a61e1e"/><stop offset="0.38" stop-color="#a61e1e"/><stop offset="0.92" stop-color="#2f2828"/></linearGradient>
<linearGradient id="g8s" gradientUnits="userSpaceOnUse" x1="543.8" y1="289.0" x2="666.0" y2="260.0"><stop offset="0" stop-color="#fff" stop-opacity="0"/><stop offset="0.45" stop-color="#fff" stop-opacity="0"/><stop offset="1" stop-color="#fff" stop-opacity="0.11"/></linearGradient>
<rect x="478" y="264" width="188" height="19.0" fill="url(#g8h)"/>
<rect x="478" y="264" width="188" height="19.0" fill="url(#g8s)"/>
<radialGradient id="g8b" gradientUnits="userSpaceOnUse" cx="0" cy="0" r="1" gradientTransform="translate(581.4 274.1) scale(94.0 6.84)"><stop offset="0" stop-color="#000" stop-opacity="0.32"/><stop offset="0.5" stop-color="#000" stop-opacity="0.224"/><stop offset="1" stop-color="#000" stop-opacity="0"/></radialGradient>
<rect x="478" y="264" width="188" height="19.0" fill="url(#g8b)"/>
<rect x="478" y="264" width="6" height="19.0" fill="url(#hdrleft)"/>
<rect x="478" y="265.35" width="188" height="1.1" fill="#fff" opacity="0.13"/>
</g>
<text x="489.70" y="279.70" font-size="10.7" textLength="151.00" lengthAdjust="spacingAndGlyphs" font-weight="bold" fill="#000" opacity="0.55">Input Global - Layer Mask (Scalar)</text>
<text x="489.00" y="278.90" font-size="10.7" textLength="151.00" lengthAdjust="spacingAndGlyphs" font-weight="bold" fill="#d0d0d0">Input Global - Layer Mask (Scalar)</text>
<path d="M652.70 272.70 L655.80 275.90 L658.90 272.70" fill="none" stroke="#fff" stroke-width="1.5" stroke-linecap="butt" stroke-linejoin="miter"/>
<path d="M494.70 294.70 L497.40 297.00 L494.70 299.30Z" fill="#2c2c2c"/>
<ellipse cx="490.40" cy="297.00" rx="3.9" ry="3.6" fill="#0c0c0c" stroke="#383838" stroke-width="1.1"/>
<text x="501.70" y="301.00" font-size="9.8" textLength="32.59" lengthAdjust="spacingAndGlyphs" fill="#000" opacity="0.55">Preview</text>
<text x="501.00" y="300.20" font-size="9.8" textLength="32.59" lengthAdjust="spacingAndGlyphs" fill="#dadada" stroke="#dadada" stroke-width="0.28">Preview</text>
<path d="M655.00 294.80 L657.40 297.00 L655.00 299.20Z" fill="#e8e8e8" opacity="0.85"/>
<ellipse cx="650.40" cy="297.00" rx="4.45" ry="4.25" fill="#fcfcfc"/>
</g>
<g>
<rect x="477.1" y="335.6" width="154.8" height="131.3" rx="6.0" fill="none" stroke="#000" stroke-width="1.8" opacity="0.18"/>
<rect x="477.9" y="336.3" width="153.2" height="129.5" rx="5.3" fill="none" stroke="#000" stroke-width="1.3" opacity="0.3"/>
<rect x="478.675" y="336.675" width="151.65" height="127.65" rx="4.325" fill="none" stroke="#101010" stroke-opacity="0.96" stroke-width="1.35"/>
<path d="M483.00 464.45 H626.00" stroke="#000" stroke-width="1.1" opacity="0.75"/>
<clipPath id="g9c"><rect x="478.90" y="336.90" width="151.20" height="127.20" rx="4.10"/></clipPath>
<g clip-path="url(#g9c)">
<rect x="478" y="336" width="153" height="129" fill="url(#bodyg)"/>
<linearGradient id="g9h" gradientUnits="userSpaceOnUse" x1="478" y1="0" x2="631" y2="0"><stop offset="0" stop-color="#6e9167"/><stop offset="0.38" stop-color="#6e9167"/><stop offset="0.92" stop-color="#2a2e2a"/></linearGradient>
<linearGradient id="g9s" gradientUnits="userSpaceOnUse" x1="531.5" y1="361.0" x2="631.0" y2="332.0"><stop offset="0" stop-color="#fff" stop-opacity="0"/><stop offset="0.45" stop-color="#fff" stop-opacity="0"/><stop offset="1" stop-color="#fff" stop-opacity="0.11"/></linearGradient>
<rect x="478" y="336" width="153" height="19.0" fill="url(#g9h)"/>
<rect x="478" y="336" width="153" height="19.0" fill="url(#g9s)"/>
<radialGradient id="g9b" gradientUnits="userSpaceOnUse" cx="0" cy="0" r="1" gradientTransform="translate(562.1 346.1) scale(76.5 6.84)"><stop offset="0" stop-color="#000" stop-opacity="0.32"/><stop offset="0.5" stop-color="#000" stop-opacity="0.224"/><stop offset="1" stop-color="#000" stop-opacity="0"/></radialGradient>
<rect x="478" y="336" width="153" height="19.0" fill="url(#g9b)"/>
<rect x="478" y="336" width="6" height="19.0" fill="url(#hdrleft)"/>
<rect x="478" y="337.35" width="153" height="1.1" fill="#fff" opacity="0.13"/>
</g>
<text x="489.70" y="351.70" font-size="10.7" textLength="73.40" lengthAdjust="spacingAndGlyphs" font-weight="bold" fill="#000" opacity="0.55">RotateAboutAxis</text>
<text x="489.00" y="350.90" font-size="10.7" textLength="73.40" lengthAdjust="spacingAndGlyphs" font-weight="bold" fill="#d0d0d0">RotateAboutAxis</text>
<path d="M617.70 344.70 L620.80 347.90 L623.90 344.70" fill="none" stroke="#fff" stroke-width="1.5" stroke-linecap="butt" stroke-linejoin="miter"/>
<path d="M551.40 455.40 L554.50 458.60 L557.60 455.40" fill="none" stroke="#fff" stroke-width="1.5" stroke-linecap="butt" stroke-linejoin="miter"/>
<path d="M495.00 366.80 L497.40 369.00 L495.00 371.20Z" fill="#e8e8e8" opacity="0.85"/>
<ellipse cx="490.40" cy="369.00" rx="4.45" ry="4.25" fill="#fcfcfc"/>
<text x="501.70" y="373.00" font-size="9.8" textLength="97.78" lengthAdjust="spacingAndGlyphs" fill="#000" opacity="0.55">NormalizedRotationAxis</text>
<text x="501.00" y="372.20" font-size="9.8" textLength="97.78" lengthAdjust="spacingAndGlyphs" fill="#dadada" stroke="#dadada" stroke-width="0.28">NormalizedRotationAxis</text>
<path d="M495.00 389.80 L497.40 392.00 L495.00 394.20Z" fill="#e8e8e8" opacity="0.85"/>
<ellipse cx="490.40" cy="392.00" rx="4.45" ry="4.25" fill="#fcfcfc"/>
<text x="501.70" y="396.00" font-size="9.8" textLength="57.57" lengthAdjust="spacingAndGlyphs" fill="#000" opacity="0.55">RotationAngle</text>
<text x="501.00" y="395.20" font-size="9.8" textLength="57.57" lengthAdjust="spacingAndGlyphs" fill="#dadada" stroke="#dadada" stroke-width="0.28">RotationAngle</text>
<path d="M495.00 412.80 L497.40 415.00 L495.00 417.20Z" fill="#e8e8e8" opacity="0.85"/>
<ellipse cx="490.40" cy="415.00" rx="4.45" ry="4.25" fill="#fcfcfc"/>
<text x="501.70" y="419.00" font-size="9.8" textLength="41.26" lengthAdjust="spacingAndGlyphs" fill="#000" opacity="0.55">PivotPoint</text>
<text x="501.00" y="418.20" font-size="9.8" textLength="41.26" lengthAdjust="spacingAndGlyphs" fill="#dadada" stroke="#dadada" stroke-width="0.28">PivotPoint</text>
<path d="M495.00 435.80 L497.40 438.00 L495.00 440.20Z" fill="#e8e8e8" opacity="0.85"/>
<ellipse cx="490.40" cy="438.00" rx="4.45" ry="4.25" fill="#fcfcfc"/>
<text x="501.70" y="442.00" font-size="9.8" textLength="32.60" lengthAdjust="spacingAndGlyphs" fill="#000" opacity="0.55">Position</text>
<text x="501.00" y="441.20" font-size="9.8" textLength="32.60" lengthAdjust="spacingAndGlyphs" fill="#dadada" stroke="#dadada" stroke-width="0.28">Position</text>
<path d="M620.00 366.80 L622.40 369.00 L620.00 371.20Z" fill="#e8e8e8" opacity="0.85"/>
<ellipse cx="615.40" cy="369.00" rx="4.45" ry="4.25" fill="#fcfcfc"/>
</g>
<g>
<path d="M483.10 329.40 L486.50 333.50 L489.90 329.40Z" fill="#e4e4e4"/>
<rect x="478.10" y="307.00" width="92.6" height="22.9" rx="3.2" fill="#f2f2f2"/>
<rect x="479.00" y="307.90" width="90.8" height="21.099999999999998" rx="2.4" fill="url(#bubg)"/>
<rect x="481.40" y="310.10" width="75.6" height="16.7" rx="8.35" fill="#fff" fill-opacity="0.22" stroke="#3c3c3c" stroke-width="0.9"/>
<text x="487.30" y="321.60" font-size="11.2" textLength="61.20" lengthAdjust="spacingAndGlyphs" fill="#1c1c1c">rotate normal</text>
<path d="M560.70 313.40 h2.4 M567.30 310.60 v5.6" stroke="#5c5c5c" stroke-width="1" fill="none"/>
<path d="M562.90 311.20 L566.90 312.40 L566.90 314.40 L562.90 315.60Z" fill="#6a6a6a"/>
<rect x="560.70" y="319.00" width="7.4" height="5.8" fill="#aebdcc"/>
<path d="M561.70 323.00 h1.3 m1 0 h1.3 m1 0 h1.3" stroke="#5a6b7c" stroke-width="1.1" fill="none"/>
</g>
<g>
<rect x="693.1" y="155.6" width="76.8" height="71.3" rx="6.0" fill="none" stroke="#000" stroke-width="1.8" opacity="0.18"/>
<rect x="693.9" y="156.3" width="75.2" height="69.5" rx="5.3" fill="none" stroke="#000" stroke-width="1.3" opacity="0.3"/>
<rect x="694.675" y="156.675" width="73.65" height="67.65" rx="4.325" fill="none" stroke="#101010" stroke-opacity="0.96" stroke-width="1.35"/>
<path d="M699.00 224.45 H764.00" stroke="#000" stroke-width="1.1" opacity="0.75"/>
<clipPath id="g10c"><rect x="694.90" y="156.90" width="73.20" height="67.20" rx="4.10"/></clipPath>
<g clip-path="url(#g10c)">
<rect x="694" y="156" width="75" height="69" fill="url(#bodyg)"/>
<linearGradient id="g10h" gradientUnits="userSpaceOnUse" x1="694" y1="0" x2="769" y2="0"><stop offset="0" stop-color="#6e9167"/><stop offset="0.38" stop-color="#6e9167"/><stop offset="0.92" stop-color="#2a2e2a"/></linearGradient>
<linearGradient id="g10s" gradientUnits="userSpaceOnUse" x1="720.2" y1="181.0" x2="769.0" y2="152.0"><stop offset="0" stop-color="#fff" stop-opacity="0"/><stop offset="0.45" stop-color="#fff" stop-opacity="0"/><stop offset="1" stop-color="#fff" stop-opacity="0.11"/></linearGradient>
<rect x="694" y="156" width="75" height="19.0" fill="url(#g10h)"/>
<rect x="694" y="156" width="75" height="19.0" fill="url(#g10s)"/>
<radialGradient id="g10b" gradientUnits="userSpaceOnUse" cx="0" cy="0" r="1" gradientTransform="translate(735.2 166.1) scale(37.5 6.84)"><stop offset="0" stop-color="#000" stop-opacity="0.48"/><stop offset="0.5" stop-color="#000" stop-opacity="0.336"/><stop offset="1" stop-color="#000" stop-opacity="0"/></radialGradient>
<rect x="694" y="156" width="75" height="19.0" fill="url(#g10b)"/>
<rect x="694" y="156" width="6" height="19.0" fill="url(#hdrleft)"/>
<rect x="694" y="157.35" width="75" height="1.1" fill="#fff" opacity="0.13"/>
</g>
<text x="705.70" y="171.70" font-size="10.7" textLength="33.90" lengthAdjust="spacingAndGlyphs" font-weight="bold" fill="#000" opacity="0.55">Multiply</text>
<text x="705.00" y="170.90" font-size="10.7" textLength="33.90" lengthAdjust="spacingAndGlyphs" font-weight="bold" fill="#d0d0d0">Multiply</text>
<path d="M755.70 164.70 L758.80 167.90 L761.90 164.70" fill="none" stroke="#fff" stroke-width="1.5" stroke-linecap="butt" stroke-linejoin="miter"/>
<path d="M710.70 186.70 L713.40 189.00 L710.70 191.30Z" fill="#333"/>
<ellipse cx="706.40" cy="189.00" rx="4.4" ry="4" fill="#3a3a3a"/>
<text x="717.70" y="193.00" font-size="9.8" textLength="6.11" lengthAdjust="spacingAndGlyphs" fill="#000" opacity="0.55">A</text>
<text x="717.00" y="192.20" font-size="9.8" textLength="6.11" lengthAdjust="spacingAndGlyphs" fill="#dadada" stroke="#dadada" stroke-width="0.28">A</text>
<path d="M710.70 209.70 L713.40 212.00 L710.70 214.30Z" fill="#333"/>
<ellipse cx="706.40" cy="212.00" rx="4.4" ry="4" fill="#3a3a3a"/>
<text x="717.70" y="216.00" font-size="9.8" textLength="6.11" lengthAdjust="spacingAndGlyphs" fill="#000" opacity="0.55">B</text>
<text x="717.00" y="215.20" font-size="9.8" textLength="6.11" lengthAdjust="spacingAndGlyphs" fill="#dadada" stroke="#dadada" stroke-width="0.28">B</text>
<path d="M758.00 186.80 L760.40 189.00 L758.00 191.20Z" fill="#e8e8e8" opacity="0.85"/>
<ellipse cx="753.40" cy="189.00" rx="4.45" ry="4.25" fill="#fcfcfc"/>
</g>
<g>
<rect x="693.1" y="215.6" width="115.8" height="62.3" rx="6.0" fill="none" stroke="#000" stroke-width="1.8" opacity="0.18"/>
<rect x="693.9" y="216.3" width="114.2" height="60.5" rx="5.3" fill="none" stroke="#000" stroke-width="1.3" opacity="0.3"/>
<rect x="694.675" y="216.675" width="112.65" height="58.65" rx="4.325" fill="none" stroke="#101010" stroke-opacity="0.96" stroke-width="1.35"/>
<path d="M699.00 275.45 H803.00" stroke="#000" stroke-width="1.1" opacity="0.75"/>
<clipPath id="g11c"><rect x="694.90" y="216.90" width="112.20" height="58.20" rx="4.10"/></clipPath>
<g clip-path="url(#g11c)">
<rect x="694" y="216" width="114" height="60" fill="url(#bodyg)"/>
<linearGradient id="g11h" gradientUnits="userSpaceOnUse" x1="694" y1="0" x2="808" y2="0"><stop offset="0" stop-color="#741f22"/><stop offset="0.38" stop-color="#741f22"/><stop offset="0.92" stop-color="#2f2828"/></linearGradient>
<linearGradient id="g11s" gradientUnits="userSpaceOnUse" x1="733.9" y1="253.0" x2="808.0" y2="212.0"><stop offset="0" stop-color="#fff" stop-opacity="0"/><stop offset="0.45" stop-color="#fff" stop-opacity="0"/><stop offset="1" stop-color="#fff" stop-opacity="0.11"/></linearGradient>
<rect x="694" y="216" width="114" height="31" fill="url(#g11h)"/>
<rect x="694" y="216" width="114" height="31" fill="url(#g11s)"/>
<radialGradient id="g11b" gradientUnits="userSpaceOnUse" cx="0" cy="0" r="1" gradientTransform="translate(756.7 232.1) scale(57.0 11.16)"><stop offset="0" stop-color="#000" stop-opacity="0.48"/><stop offset="0.5" stop-color="#000" stop-opacity="0.336"/><stop offset="1" stop-color="#000" stop-opacity="0"/></radialGradient>
<rect x="694" y="216" width="114" height="31" fill="url(#g11b)"/>
<rect x="694" y="216" width="6" height="31" fill="url(#hdrleft)"/>
<rect x="694" y="217.35" width="114" height="1.1" fill="#fff" opacity="0.13"/>
</g>
<text x="705.70" y="231.20" font-size="10.7" textLength="76.30" lengthAdjust="spacingAndGlyphs" font-weight="bold" fill="#000" opacity="0.55">Static Bool (True)</text>
<text x="705.00" y="230.40" font-size="10.7" textLength="76.30" lengthAdjust="spacingAndGlyphs" font-weight="bold" fill="#d0d0d0">Static Bool (True)</text>
<text x="705.00" y="243.30" font-size="9.2" textLength="41.60" lengthAdjust="spacingAndGlyphs" font-style="italic" fill="#c88e6c">Input Data</text>
<path d="M797.00 258.60 L799.40 260.80 L797.00 263.00Z" fill="#e8e8e8" opacity="0.85"/>
<ellipse cx="792.40" cy="260.80" rx="4.45" ry="4.25" fill="#fcfcfc"/>
<text x="717.70" y="266.10" font-size="9.8" textLength="22.76" lengthAdjust="spacingAndGlyphs" fill="#000" opacity="0.55">Value</text>
<text x="717.00" y="265.30" font-size="9.8" textLength="22.76" lengthAdjust="spacingAndGlyphs" fill="#dadada" stroke="#dadada" stroke-width="0.28">Value</text>
<rect x="744.5" y="255.5" width="13" height="13" fill="#0c0c10" stroke="#3c3c3c" stroke-width="1"/>
<path d="M747.5 262 l2.6 2.8 l5 -5.6" fill="none" stroke="#2d8ceb" stroke-width="1.7"/>
</g>
<g>
<rect x="825.1" y="155.6" width="65.8" height="71.3" rx="6.0" fill="none" stroke="#000" stroke-width="1.8" opacity="0.18"/>
<rect x="825.9" y="156.3" width="64.2" height="69.5" rx="5.3" fill="none" stroke="#000" stroke-width="1.3" opacity="0.3"/>
<rect x="826.675" y="156.675" width="62.65" height="67.65" rx="4.325" fill="none" stroke="#101010" stroke-opacity="0.96" stroke-width="1.35"/>
<path d="M831.00 224.45 H885.00" stroke="#000" stroke-width="1.1" opacity="0.75"/>
<clipPath id="g12c"><rect x="826.90" y="156.90" width="62.20" height="67.20" rx="4.10"/></clipPath>
<g clip-path="url(#g12c)">
<rect x="826" y="156" width="64" height="69" fill="url(#bodyg)"/>
<linearGradient id="g12h" gradientUnits="userSpaceOnUse" x1="826" y1="0" x2="890" y2="0"><stop offset="0" stop-color="#6e9167"/><stop offset="0.38" stop-color="#6e9167"/><stop offset="0.92" stop-color="#2a2e2a"/></linearGradient>
<linearGradient id="g12s" gradientUnits="userSpaceOnUse" x1="848.4" y1="181.0" x2="890.0" y2="152.0"><stop offset="0" stop-color="#fff" stop-opacity="0"/><stop offset="0.45" stop-color="#fff" stop-opacity="0"/><stop offset="1" stop-color="#fff" stop-opacity="0.11"/></linearGradient>
<rect x="826" y="156" width="64" height="19.0" fill="url(#g12h)"/>
<rect x="826" y="156" width="64" height="19.0" fill="url(#g12s)"/>
<radialGradient id="g12b" gradientUnits="userSpaceOnUse" cx="0" cy="0" r="1" gradientTransform="translate(861.2 166.1) scale(32.0 6.84)"><stop offset="0" stop-color="#000" stop-opacity="0.48"/><stop offset="0.5" stop-color="#000" stop-opacity="0.336"/><stop offset="1" stop-color="#000" stop-opacity="0"/></radialGradient>
<rect x="826" y="156" width="64" height="19.0" fill="url(#g12b)"/>
<rect x="826" y="156" width="6" height="19.0" fill="url(#hdrleft)"/>
<rect x="826" y="157.35" width="64" height="1.1" fill="#fff" opacity="0.13"/>
</g>
<text x="837.10" y="171.70" font-size="10.7" textLength="17.50" lengthAdjust="spacingAndGlyphs" font-weight="bold" fill="#000" opacity="0.55">Add</text>
<text x="836.40" y="170.90" font-size="10.7" textLength="17.50" lengthAdjust="spacingAndGlyphs" font-weight="bold" fill="#d0d0d0">Add</text>
<path d="M878.10 164.70 L881.20 167.90 L884.30 164.70" fill="none" stroke="#fff" stroke-width="1.5" stroke-linecap="butt" stroke-linejoin="miter"/>
<path d="M842.70 186.70 L845.40 189.00 L842.70 191.30Z" fill="#333"/>
<ellipse cx="838.40" cy="189.00" rx="4.4" ry="4" fill="#3a3a3a"/>
<text x="849.70" y="193.00" font-size="9.8" textLength="6.11" lengthAdjust="spacingAndGlyphs" fill="#000" opacity="0.55">A</text>
<text x="849.00" y="192.20" font-size="9.8" textLength="6.11" lengthAdjust="spacingAndGlyphs" fill="#dadada" stroke="#dadada" stroke-width="0.28">A</text>
<path d="M842.70 209.70 L845.40 212.00 L842.70 214.30Z" fill="#333"/>
<ellipse cx="838.40" cy="212.00" rx="4.4" ry="4" fill="#3a3a3a"/>
<text x="849.70" y="216.00" font-size="9.8" textLength="6.11" lengthAdjust="spacingAndGlyphs" fill="#000" opacity="0.55">B</text>
<text x="849.00" y="215.20" font-size="9.8" textLength="6.11" lengthAdjust="spacingAndGlyphs" fill="#dadada" stroke="#dadada" stroke-width="0.28">B</text>
<path d="M880.00 186.80 L882.40 189.00 L880.00 191.20Z" fill="#e8e8e8" opacity="0.85"/>
<ellipse cx="875.40" cy="189.00" rx="4.45" ry="4.25" fill="#fcfcfc"/>
</g>
<g>
<rect x="825.1" y="227.6" width="187.8" height="48.3" rx="6.0" fill="none" stroke="#000" stroke-width="1.8" opacity="0.18"/>
<rect x="825.9" y="228.3" width="186.2" height="46.5" rx="5.3" fill="none" stroke="#000" stroke-width="1.3" opacity="0.3"/>
<rect x="826.675" y="228.675" width="184.65" height="44.65" rx="4.325" fill="none" stroke="#101010" stroke-opacity="0.96" stroke-width="1.35"/>
<path d="M831.00 273.45 H1007.00" stroke="#000" stroke-width="1.1" opacity="0.75"/>
<clipPath id="g13c"><rect x="826.90" y="228.90" width="184.20" height="44.20" rx="4.10"/></clipPath>
<g clip-path="url(#g13c)">
<rect x="826" y="228" width="186" height="46" fill="url(#bodyg)"/>
<linearGradient id="g13h" gradientUnits="userSpaceOnUse" x1="826" y1="0" x2="1012" y2="0"><stop offset="0" stop-color="#a61e1e"/><stop offset="0.38" stop-color="#a61e1e"/><stop offset="0.92" stop-color="#2f2828"/></linearGradient>
<linearGradient id="g13s" gradientUnits="userSpaceOnUse" x1="891.1" y1="253.0" x2="1012.0" y2="224.0"><stop offset="0" stop-color="#fff" stop-opacity="0"/><stop offset="0.45" stop-color="#fff" stop-opacity="0"/><stop offset="1" stop-color="#fff" stop-opacity="0.11"/></linearGradient>
<rect x="826" y="228" width="186" height="19.0" fill="url(#g13h)"/>
<rect x="826" y="228" width="186" height="19.0" fill="url(#g13s)"/>
<radialGradient id="g13b" gradientUnits="userSpaceOnUse" cx="0" cy="0" r="1" gradientTransform="translate(928.3 238.1) scale(93.0 6.84)"><stop offset="0" stop-color="#000" stop-opacity="0.32"/><stop offset="0.5" stop-color="#000" stop-opacity="0.224"/><stop offset="1" stop-color="#000" stop-opacity="0"/></radialGradient>
<rect x="826" y="228" width="186" height="19.0" fill="url(#g13b)"/>
<rect x="826" y="228" width="6" height="19.0" fill="url(#hdrleft)"/>
<rect x="826" y="229.35" width="186" height="1.1" fill="#fff" opacity="0.13"/>
</g>
<text x="837.70" y="243.70" font-size="10.7" textLength="149.30" lengthAdjust="spacingAndGlyphs" font-weight="bold" fill="#000" opacity="0.55">Input Global - Enable (StaticBool)</text>
<text x="837.00" y="242.90" font-size="10.7" textLength="149.30" lengthAdjust="spacingAndGlyphs" font-weight="bold" fill="#d0d0d0">Input Global - Enable (StaticBool)</text>
<path d="M998.70 236.70 L1001.80 239.90 L1004.90 236.70" fill="none" stroke="#fff" stroke-width="1.5" stroke-linecap="butt" stroke-linejoin="miter"/>
<path d="M842.70 258.70 L845.40 261.00 L842.70 263.30Z" fill="#333"/>
<ellipse cx="838.40" cy="261.00" rx="4.4" ry="4" fill="#3a3a3a"/>
<text x="849.70" y="265.00" font-size="9.8" textLength="32.59" lengthAdjust="spacingAndGlyphs" fill="#000" opacity="0.55">Preview</text>
<text x="849.00" y="264.20" font-size="9.8" textLength="32.59" lengthAdjust="spacingAndGlyphs" fill="#dadada" stroke="#dadada" stroke-width="0.28">Preview</text>
<path d="M1001.00 258.80 L1003.40 261.00 L1001.00 263.20Z" fill="#e8e8e8" opacity="0.85"/>
<ellipse cx="996.40" cy="261.00" rx="4.45" ry="4.25" fill="#fcfcfc"/>
</g>
<g>
<rect x="1041.1" y="155.6" width="82.8" height="94.3" rx="6.0" fill="none" stroke="#000" stroke-width="1.8" opacity="0.18"/>
<rect x="1041.9" y="156.3" width="81.2" height="92.5" rx="5.3" fill="none" stroke="#000" stroke-width="1.3" opacity="0.3"/>
<rect x="1042.675" y="156.675" width="79.65" height="90.65" rx="4.325" fill="none" stroke="#101010" stroke-opacity="0.96" stroke-width="1.35"/>
<path d="M1047.00 247.45 H1118.00" stroke="#000" stroke-width="1.1" opacity="0.75"/>
<clipPath id="g14c"><rect x="1042.90" y="156.90" width="79.20" height="90.20" rx="4.10"/></clipPath>
<g clip-path="url(#g14c)">
<rect x="1042" y="156" width="81" height="92" fill="url(#bodyg)"/>
<linearGradient id="g14h" gradientUnits="userSpaceOnUse" x1="1042" y1="0" x2="1123" y2="0"><stop offset="0" stop-color="#6e9167"/><stop offset="0.38" stop-color="#6e9167"/><stop offset="0.92" stop-color="#2a2e2a"/></linearGradient>
<linearGradient id="g14s" gradientUnits="userSpaceOnUse" x1="1070.3" y1="181.0" x2="1123.0" y2="152.0"><stop offset="0" stop-color="#fff" stop-opacity="0"/><stop offset="0.45" stop-color="#fff" stop-opacity="0"/><stop offset="1" stop-color="#fff" stop-opacity="0.11"/></linearGradient>
<rect x="1042" y="156" width="81" height="19.0" fill="url(#g14h)"/>
<rect x="1042" y="156" width="81" height="19.0" fill="url(#g14s)"/>
<radialGradient id="g14b" gradientUnits="userSpaceOnUse" cx="0" cy="0" r="1" gradientTransform="translate(1086.5 166.1) scale(40.5 6.84)"><stop offset="0" stop-color="#000" stop-opacity="0.48"/><stop offset="0.5" stop-color="#000" stop-opacity="0.336"/><stop offset="1" stop-color="#000" stop-opacity="0"/></radialGradient>
<rect x="1042" y="156" width="81" height="19.0" fill="url(#g14b)"/>
<rect x="1042" y="156" width="6" height="19.0" fill="url(#hdrleft)"/>
<rect x="1042" y="157.35" width="81" height="1.1" fill="#fff" opacity="0.13"/>
</g>
<text x="1053.70" y="171.70" font-size="10.7" textLength="29.10" lengthAdjust="spacingAndGlyphs" font-weight="bold" fill="#000" opacity="0.55">Switch</text>
<text x="1053.00" y="170.90" font-size="10.7" textLength="29.10" lengthAdjust="spacingAndGlyphs" font-weight="bold" fill="#d0d0d0">Switch</text>
<path d="M1111.10 164.70 L1114.20 167.90 L1117.30 164.70" fill="none" stroke="#fff" stroke-width="1.5" stroke-linecap="butt" stroke-linejoin="miter"/>
<path d="M1059.00 186.80 L1061.40 189.00 L1059.00 191.20Z" fill="#e8e8e8" opacity="0.85"/>
<ellipse cx="1054.40" cy="189.00" rx="4.45" ry="4.25" fill="#fcfcfc"/>
<text x="1065.70" y="193.00" font-size="9.8" textLength="18.50" lengthAdjust="spacingAndGlyphs" fill="#000" opacity="0.55">True</text>
<text x="1065.00" y="192.20" font-size="9.8" textLength="18.50" lengthAdjust="spacingAndGlyphs" fill="#dadada" stroke="#dadada" stroke-width="0.28">True</text>
<path d="M1059.00 209.80 L1061.40 212.00 L1059.00 214.20Z" fill="#e8e8e8" opacity="0.85"/>
<ellipse cx="1054.40" cy="212.00" rx="4.45" ry="4.25" fill="#fcfcfc"/>
<text x="1065.70" y="216.00" font-size="9.8" textLength="22.41" lengthAdjust="spacingAndGlyphs" fill="#000" opacity="0.55">False</text>
<text x="1065.00" y="215.20" font-size="9.8" textLength="22.41" lengthAdjust="spacingAndGlyphs" fill="#dadada" stroke="#dadada" stroke-width="0.28">False</text>
<path d="M1058.70 232.70 L1061.40 235.00 L1058.70 237.30Z" fill="#333"/>
<ellipse cx="1054.40" cy="235.00" rx="4.4" ry="4" fill="#3a3a3a"/>
<text x="1065.70" y="239.00" font-size="9.8" textLength="22.76" lengthAdjust="spacingAndGlyphs" fill="#000" opacity="0.55">Value</text>
<text x="1065.00" y="238.20" font-size="9.8" textLength="22.76" lengthAdjust="spacingAndGlyphs" fill="#dadada" stroke="#dadada" stroke-width="0.28">Value</text>
<path d="M1113.00 186.80 L1115.40 189.00 L1113.00 191.20Z" fill="#e8e8e8" opacity="0.85"/>
<ellipse cx="1108.40" cy="189.00" rx="4.45" ry="4.25" fill="#fcfcfc"/>
</g>
<g>
<rect x="1148.1" y="155.6" width="92.8" height="73.7" rx="6.0" fill="none" stroke="#000" stroke-width="1.8" opacity="0.18"/>
<rect x="1148.9" y="156.3" width="91.2" height="71.9" rx="5.3" fill="none" stroke="#000" stroke-width="1.3" opacity="0.3"/>
<rect x="1149.675" y="156.675" width="89.65" height="70.05000000000001" rx="4.325" fill="none" stroke="#101010" stroke-opacity="0.96" stroke-width="1.35"/>
<path d="M1154.00 226.85 H1235.00" stroke="#000" stroke-width="1.1" opacity="0.75"/>
<clipPath id="g15c"><rect x="1149.90" y="156.90" width="89.20" height="69.60" rx="4.10"/></clipPath>
<g clip-path="url(#g15c)">
<rect x="1149.0" y="156" width="91" height="71.4" fill="url(#bodyg)"/>
<linearGradient id="g15h" gradientUnits="userSpaceOnUse" x1="1149.0" y1="0" x2="1240.0" y2="0"><stop offset="0" stop-color="#2c2cba"/><stop offset="0.38" stop-color="#2c2cba"/><stop offset="0.92" stop-color="#1c1c5c"/></linearGradient>
<linearGradient id="g15s" gradientUnits="userSpaceOnUse" x1="1180.8" y1="207.2" x2="1240.0" y2="152.0"><stop offset="0" stop-color="#fff" stop-opacity="0"/><stop offset="0.45" stop-color="#fff" stop-opacity="0"/><stop offset="1" stop-color="#fff" stop-opacity="0.11"/></linearGradient>
<rect x="1149.0" y="156" width="91" height="45.2" fill="url(#g15h)"/>
<rect x="1149.0" y="156" width="91" height="45.2" fill="url(#g15s)"/>
<radialGradient id="g15b" gradientUnits="userSpaceOnUse" cx="0" cy="0" r="1" gradientTransform="translate(1199.0 181.5) scale(45.5 13)"><stop offset="0" stop-color="#000" stop-opacity="0.48"/><stop offset="0.5" stop-color="#000" stop-opacity="0.336"/><stop offset="1" stop-color="#000" stop-opacity="0"/></radialGradient>
<rect x="1149.0" y="156" width="91" height="45.2" fill="url(#g15b)"/>
<rect x="1149.0" y="156" width="6" height="45.2" fill="url(#hdrleft)"/>
<rect x="1149.0" y="157.35" width="91" height="1.1" fill="#fff" opacity="0.13"/>
</g>
<text x="1159.90" y="171.20" font-size="10.7" textLength="54.00" lengthAdjust="spacingAndGlyphs" font-weight="bold" fill="#000" opacity="0.55">Output WPO</text>
<text x="1159.20" y="170.40" font-size="10.7" textLength="54.00" lengthAdjust="spacingAndGlyphs" font-weight="bold" fill="#d0d0d0">Output WPO</text>
<text x="1159.20" y="195.80" font-size="9.2" textLength="44.10" lengthAdjust="spacingAndGlyphs" font-style="italic" fill="#7a7ac4">Previewing</text>
<path d="M1226.70 176.40 L1229.80 179.60 L1232.90 176.40" fill="none" stroke="#fff" stroke-width="1.5" stroke-linecap="butt" stroke-linejoin="miter"/>
<path d="M1165.80 211.80 L1168.20 214.00 L1165.80 216.20Z" fill="#e8e8e8" opacity="0.85"/>
<ellipse cx="1161.20" cy="214.00" rx="4.45" ry="4.25" fill="#fcfcfc"/>
<path d="M1229.60 211.80 L1232.00 214.00 L1229.60 216.20Z" fill="#e8e8e8" opacity="0.85"/>
<ellipse cx="1225.00" cy="214.00" rx="4.45" ry="4.25" fill="#fcfcfc"/>
</g>
<g>
<rect x="1269.1" y="107.6" width="65.8" height="71.3" rx="6.0" fill="none" stroke="#000" stroke-width="1.8" opacity="0.18"/>
<rect x="1269.9" y="108.3" width="64.2" height="69.5" rx="5.3" fill="none" stroke="#000" stroke-width="1.3" opacity="0.3"/>
<rect x="1270.675" y="108.675" width="62.65" height="67.65" rx="4.325" fill="none" stroke="#101010" stroke-opacity="0.96" stroke-width="1.35"/>
<path d="M1275.00 176.45 H1329.00" stroke="#000" stroke-width="1.1" opacity="0.75"/>
<clipPath id="g16c"><rect x="1270.90" y="108.90" width="62.20" height="67.20" rx="4.10"/></clipPath>
<g clip-path="url(#g16c)">
<rect x="1270" y="108" width="64" height="69" fill="url(#bodyg)"/>
<linearGradient id="g16h" gradientUnits="userSpaceOnUse" x1="1270" y1="0" x2="1334" y2="0"><stop offset="0" stop-color="#6e9167"/><stop offset="0.38" stop-color="#6e9167"/><stop offset="0.92" stop-color="#2a2e2a"/></linearGradient>
<linearGradient id="g16s" gradientUnits="userSpaceOnUse" x1="1292.4" y1="133.0" x2="1334.0" y2="104.0"><stop offset="0" stop-color="#fff" stop-opacity="0"/><stop offset="0.45" stop-color="#fff" stop-opacity="0"/><stop offset="1" stop-color="#fff" stop-opacity="0.11"/></linearGradient>
<rect x="1270" y="108" width="64" height="19.0" fill="url(#g16h)"/>
<rect x="1270" y="108" width="64" height="19.0" fill="url(#g16s)"/>
<radialGradient id="g16b" gradientUnits="userSpaceOnUse" cx="0" cy="0" r="1" gradientTransform="translate(1305.2 118.1) scale(32.0 6.84)"><stop offset="0" stop-color="#000" stop-opacity="0.48"/><stop offset="0.5" stop-color="#000" stop-opacity="0.336"/><stop offset="1" stop-color="#000" stop-opacity="0"/></radialGradient>
<rect x="1270" y="108" width="64" height="19.0" fill="url(#g16b)"/>
<rect x="1270" y="108" width="6" height="19.0" fill="url(#hdrleft)"/>
<rect x="1270" y="109.35" width="64" height="1.1" fill="#fff" opacity="0.13"/>
</g>
<text x="1281.10" y="123.70" font-size="10.7" textLength="17.50" lengthAdjust="spacingAndGlyphs" font-weight="bold" fill="#000" opacity="0.55">Add</text>
<text x="1280.40" y="122.90" font-size="10.7" textLength="17.50" lengthAdjust="spacingAndGlyphs" font-weight="bold" fill="#d0d0d0">Add</text>
<path d="M1322.10 116.70 L1325.20 119.90 L1328.30 116.70" fill="none" stroke="#fff" stroke-width="1.5" stroke-linecap="butt" stroke-linejoin="miter"/>
<path d="M1286.70 138.70 L1289.40 141.00 L1286.70 143.30Z" fill="#333"/>
<ellipse cx="1282.40" cy="141.00" rx="4.4" ry="4" fill="#3a3a3a"/>
<text x="1293.70" y="145.00" font-size="9.8" textLength="6.11" lengthAdjust="spacingAndGlyphs" fill="#000" opacity="0.55">A</text>
<text x="1293.00" y="144.20" font-size="9.8" textLength="6.11" lengthAdjust="spacingAndGlyphs" fill="#dadada" stroke="#dadada" stroke-width="0.28">A</text>
<path d="M1286.70 161.70 L1289.40 164.00 L1286.70 166.30Z" fill="#333"/>
<ellipse cx="1282.40" cy="164.00" rx="4.4" ry="4" fill="#3a3a3a"/>
<text x="1293.70" y="168.00" font-size="9.8" textLength="6.11" lengthAdjust="spacingAndGlyphs" fill="#000" opacity="0.55">B</text>
<text x="1293.00" y="167.20" font-size="9.8" textLength="6.11" lengthAdjust="spacingAndGlyphs" fill="#dadada" stroke="#dadada" stroke-width="0.28">B</text>
<path d="M1324.00 138.80 L1326.40 141.00 L1324.00 143.20Z" fill="#e8e8e8" opacity="0.85"/>
<ellipse cx="1319.40" cy="141.00" rx="4.45" ry="4.25" fill="#fcfcfc"/>
</g>
<g>
<rect x="1350.3" y="107.6" width="86.6" height="48.3" rx="6.0" fill="none" stroke="#000" stroke-width="1.8" opacity="0.18"/>
<rect x="1351.1000000000001" y="108.3" width="85.0" height="46.5" rx="5.3" fill="none" stroke="#000" stroke-width="1.3" opacity="0.3"/>
<rect x="1351.875" y="108.675" width="83.45" height="44.65" rx="4.325" fill="none" stroke="#101010" stroke-opacity="0.96" stroke-width="1.35"/>
<path d="M1356.20 153.45 H1431.00" stroke="#000" stroke-width="1.1" opacity="0.75"/>
<clipPath id="g17c"><rect x="1352.10" y="108.90" width="83.00" height="44.20" rx="4.10"/></clipPath>
<g clip-path="url(#g17c)">
<rect x="1351.2" y="108" width="84.8" height="46" fill="url(#bodyg)"/>
<linearGradient id="g17h" gradientUnits="userSpaceOnUse" x1="1351.2" y1="0" x2="1436.0" y2="0"><stop offset="0" stop-color="#a08a76"/><stop offset="0.38" stop-color="#a08a76"/><stop offset="0.92" stop-color="#34302d"/></linearGradient>
<linearGradient id="g17s" gradientUnits="userSpaceOnUse" x1="1380.9" y1="133.0" x2="1436.0" y2="104.0"><stop offset="0" stop-color="#fff" stop-opacity="0"/><stop offset="0.45" stop-color="#fff" stop-opacity="0"/><stop offset="1" stop-color="#fff" stop-opacity="0.11"/></linearGradient>
<rect x="1351.2" y="108" width="84.8" height="19.0" fill="url(#g17h)"/>
<rect x="1351.2" y="108" width="84.8" height="19.0" fill="url(#g17s)"/>
<radialGradient id="g17b" gradientUnits="userSpaceOnUse" cx="0" cy="0" r="1" gradientTransform="translate(1397.8 118.1) scale(42.4 6.84)"><stop offset="0" stop-color="#000" stop-opacity="0.48"/><stop offset="0.5" stop-color="#000" stop-opacity="0.336"/><stop offset="1" stop-color="#000" stop-opacity="0"/></radialGradient>
<rect x="1351.2" y="108" width="84.8" height="19.0" fill="url(#g17b)"/>
<rect x="1351.2" y="108" width="6" height="19.0" fill="url(#hdrleft)"/>
<rect x="1351.2" y="109.35" width="84.8" height="1.1" fill="#fff" opacity="0.13"/>
</g>
<text x="1362.90" y="123.70" font-size="10.7" textLength="48.00" lengthAdjust="spacingAndGlyphs" font-weight="bold" fill="#000" opacity="0.55">Output WP</text>
<text x="1362.20" y="122.90" font-size="10.7" textLength="48.00" lengthAdjust="spacingAndGlyphs" font-weight="bold" fill="#d0d0d0">Output WP</text>
<path d="M1422.70 116.70 L1425.80 119.90 L1428.90 116.70" fill="none" stroke="#fff" stroke-width="1.5" stroke-linecap="butt" stroke-linejoin="miter"/>
<path d="M1368.20 138.80 L1370.60 141.00 L1368.20 143.20Z" fill="#e8e8e8" opacity="0.85"/>
<ellipse cx="1363.60" cy="141.00" rx="4.45" ry="4.25" fill="#fcfcfc"/>
<path d="M1424.70 138.70 L1427.60 141.00 L1424.70 143.30Z" fill="#dedede"/>
<ellipse cx="1420.40" cy="141.00" rx="3.6" ry="3.3" fill="#1a1a1a" stroke="#f4f4f4" stroke-width="1.6"/>
</g>
<g>
<rect x="728.8000000000001" y="295.40000000000003" width="93.2" height="47.3" rx="6.0" fill="none" stroke="#000" stroke-width="1.8" opacity="0.18"/>
<rect x="729.6" y="296.1" width="91.60000000000001" height="45.5" rx="5.3" fill="none" stroke="#000" stroke-width="1.3" opacity="0.3"/>
<rect x="730.375" y="296.475" width="90.05000000000001" height="43.65" rx="4.325" fill="none" stroke="#101010" stroke-opacity="0.96" stroke-width="1.35"/>
<path d="M734.70 340.25 H816.10" stroke="#000" stroke-width="1.1" opacity="0.75"/>
<clipPath id="g18c"><rect x="730.60" y="296.70" width="89.60" height="43.20" rx="4.10"/></clipPath>
<g clip-path="url(#g18c)">
<rect x="729.7" y="295.8" width="91.4" height="45" fill="url(#bodyg)"/>
<linearGradient id="g18h" gradientUnits="userSpaceOnUse" x1="729.7" y1="0" x2="821.1" y2="0"><stop offset="0" stop-color="#a81f52"/><stop offset="0.38" stop-color="#a81f52"/><stop offset="0.92" stop-color="#2f282b"/></linearGradient>
<linearGradient id="g18s" gradientUnits="userSpaceOnUse" x1="761.7" y1="320.0" x2="821.1" y2="291.8"><stop offset="0" stop-color="#fff" stop-opacity="0"/><stop offset="0.45" stop-color="#fff" stop-opacity="0"/><stop offset="1" stop-color="#fff" stop-opacity="0.11"/></linearGradient>
<rect x="729.7" y="295.8" width="91.4" height="18.2" fill="url(#g18h)"/>
<rect x="729.7" y="295.8" width="91.4" height="18.2" fill="url(#g18s)"/>
<radialGradient id="g18b" gradientUnits="userSpaceOnUse" cx="0" cy="0" r="1" gradientTransform="translate(780.0 305.5) scale(45.7 6.55)"><stop offset="0" stop-color="#000" stop-opacity="0.48"/><stop offset="0.5" stop-color="#000" stop-opacity="0.336"/><stop offset="1" stop-color="#000" stop-opacity="0"/></radialGradient>
<rect x="729.7" y="295.8" width="91.4" height="18.2" fill="url(#g18b)"/>
<rect x="729.7" y="295.8" width="6" height="18.2" fill="url(#hdrleft)"/>
<rect x="729.7" y="297.15000000000003" width="91.4" height="1.1" fill="#fff" opacity="0.13"/>
</g>
<text x="741.40" y="310.50" font-size="10.7" textLength="53.60" lengthAdjust="spacingAndGlyphs" font-weight="bold" fill="#000" opacity="0.55">WSNormals</text>
<text x="740.70" y="309.70" font-size="10.7" textLength="53.60" lengthAdjust="spacingAndGlyphs" font-weight="bold" fill="#d0d0d0">WSNormals</text>
<path d="M807.80 303.50 L810.90 306.70 L814.00 303.50" fill="none" stroke="#fff" stroke-width="1.5" stroke-linecap="butt" stroke-linejoin="miter"/>
<path d="M810.10 325.60 L812.50 327.80 L810.10 330.00Z" fill="#e8e8e8" opacity="0.85"/>
<ellipse cx="805.50" cy="327.80" rx="4.45" ry="4.25" fill="#fcfcfc"/>
</g>
<g>
<path d="M735.00 357.00 L738.40 361.10 L741.80 357.00Z" fill="#e4e4e4"/>
<rect x="730.00" y="334.60" width="98.6" height="22.9" rx="3.2" fill="#f2f2f2"/>
<rect x="730.90" y="335.50" width="96.8" height="21.099999999999998" rx="2.4" fill="url(#bubg)"/>
<rect x="733.30" y="337.70" width="82" height="16.7" rx="8.35" fill="#fff" fill-opacity="0.22" stroke="#3c3c3c" stroke-width="0.9"/>
<text x="739.20" y="349.20" font-size="11.2" textLength="67.80" lengthAdjust="spacingAndGlyphs" fill="#1c1c1c">rotated normal</text>
<path d="M818.60 341.00 h2.4 M825.20 338.20 v5.6" stroke="#5c5c5c" stroke-width="1" fill="none"/>
<path d="M820.80 338.80 L824.80 340.00 L824.80 342.00 L820.80 343.20Z" fill="#6a6a6a"/>
<rect x="818.60" y="346.60" width="7.4" height="5.8" fill="#aebdcc"/>
<path d="M819.60 350.60 h1.3 m1 0 h1.3 m1 0 h1.3" stroke="#5a6b7c" stroke-width="1.1" fill="none"/>
</g>
<g>
<rect x="729.1" y="362.6" width="104.8" height="48.3" rx="6.0" fill="none" stroke="#000" stroke-width="1.8" opacity="0.18"/>
<rect x="729.9" y="363.3" width="103.2" height="46.5" rx="5.3" fill="none" stroke="#000" stroke-width="1.3" opacity="0.3"/>
<rect x="730.675" y="363.675" width="101.65" height="44.65" rx="4.325" fill="none" stroke="#101010" stroke-opacity="0.96" stroke-width="1.35"/>
<path d="M735.00 408.45 H828.00" stroke="#000" stroke-width="1.1" opacity="0.75"/>
<clipPath id="g19c"><rect x="730.90" y="363.90" width="101.20" height="44.20" rx="4.10"/></clipPath>
<g clip-path="url(#g19c)">
<rect x="730" y="363" width="103" height="46" fill="url(#bodyg)"/>
<linearGradient id="g19h" gradientUnits="userSpaceOnUse" x1="730" y1="0" x2="833" y2="0"><stop offset="0" stop-color="#6e9167"/><stop offset="0.38" stop-color="#6e9167"/><stop offset="0.92" stop-color="#2a2e2a"/></linearGradient>
<linearGradient id="g19s" gradientUnits="userSpaceOnUse" x1="766.0" y1="388.0" x2="833.0" y2="359.0"><stop offset="0" stop-color="#fff" stop-opacity="0"/><stop offset="0.45" stop-color="#fff" stop-opacity="0"/><stop offset="1" stop-color="#fff" stop-opacity="0.11"/></linearGradient>
<rect x="730" y="363" width="103" height="19.0" fill="url(#g19h)"/>
<rect x="730" y="363" width="103" height="19.0" fill="url(#g19s)"/>
<radialGradient id="g19b" gradientUnits="userSpaceOnUse" cx="0" cy="0" r="1" gradientTransform="translate(786.6 373.1) scale(51.5 6.84)"><stop offset="0" stop-color="#000" stop-opacity="0.48"/><stop offset="0.5" stop-color="#000" stop-opacity="0.336"/><stop offset="1" stop-color="#000" stop-opacity="0"/></radialGradient>
<rect x="730" y="363" width="103" height="19.0" fill="url(#g19b)"/>
<rect x="730" y="363" width="6" height="19.0" fill="url(#hdrleft)"/>
<rect x="730" y="364.35" width="103" height="1.1" fill="#fff" opacity="0.13"/>
</g>
<text x="741.70" y="378.70" font-size="10.7" textLength="46.90" lengthAdjust="spacingAndGlyphs" font-weight="bold" fill="#000" opacity="0.55">Normalize</text>
<text x="741.00" y="377.90" font-size="10.7" textLength="46.90" lengthAdjust="spacingAndGlyphs" font-weight="bold" fill="#d0d0d0">Normalize</text>
<path d="M819.70 371.70 L822.80 374.90 L825.90 371.70" fill="none" stroke="#fff" stroke-width="1.5" stroke-linecap="butt" stroke-linejoin="miter"/>
<path d="M747.00 393.80 L749.40 396.00 L747.00 398.20Z" fill="#e8e8e8" opacity="0.85"/>
<ellipse cx="742.40" cy="396.00" rx="4.45" ry="4.25" fill="#fcfcfc"/>
<text x="753.70" y="400.00" font-size="9.8" textLength="46.36" lengthAdjust="spacingAndGlyphs" fill="#000" opacity="0.55">VectorInput</text>
<text x="753.00" y="399.20" font-size="9.8" textLength="46.36" lengthAdjust="spacingAndGlyphs" fill="#dadada" stroke="#dadada" stroke-width="0.28">VectorInput</text>
<path d="M822.00 393.80 L824.40 396.00 L822.00 398.20Z" fill="#e8e8e8" opacity="0.85"/>
<ellipse cx="817.40" cy="396.00" rx="4.45" ry="4.25" fill="#fcfcfc"/>
</g>
<g>
<rect x="849.1" y="343.6" width="82.8" height="93.7" rx="6.0" fill="none" stroke="#000" stroke-width="1.8" opacity="0.18"/>
<rect x="849.9" y="344.3" width="81.2" height="91.9" rx="5.3" fill="none" stroke="#000" stroke-width="1.3" opacity="0.3"/>
<rect x="850.675" y="344.675" width="79.65" height="90.05000000000001" rx="4.325" fill="none" stroke="#101010" stroke-opacity="0.96" stroke-width="1.35"/>
<path d="M855.00 434.85 H926.00" stroke="#000" stroke-width="1.1" opacity="0.75"/>
<clipPath id="g20c"><rect x="850.90" y="344.90" width="79.20" height="89.60" rx="4.10"/></clipPath>
<g clip-path="url(#g20c)">
<rect x="850" y="344" width="81" height="91.4" fill="url(#bodyg)"/>
<linearGradient id="g20h" gradientUnits="userSpaceOnUse" x1="850" y1="0" x2="931" y2="0"><stop offset="0" stop-color="#6e9167"/><stop offset="0.38" stop-color="#6e9167"/><stop offset="0.92" stop-color="#2a2e2a"/></linearGradient>
<linearGradient id="g20s" gradientUnits="userSpaceOnUse" x1="878.4" y1="368.5" x2="931.0" y2="340.0"><stop offset="0" stop-color="#fff" stop-opacity="0"/><stop offset="0.45" stop-color="#fff" stop-opacity="0"/><stop offset="1" stop-color="#fff" stop-opacity="0.11"/></linearGradient>
<rect x="850" y="344" width="81" height="18.5" fill="url(#g20h)"/>
<rect x="850" y="344" width="81" height="18.5" fill="url(#g20s)"/>
<radialGradient id="g20b" gradientUnits="userSpaceOnUse" cx="0" cy="0" r="1" gradientTransform="translate(894.5 353.9) scale(40.5 6.66)"><stop offset="0" stop-color="#000" stop-opacity="0.48"/><stop offset="0.5" stop-color="#000" stop-opacity="0.336"/><stop offset="1" stop-color="#000" stop-opacity="0"/></radialGradient>
<rect x="850" y="344" width="81" height="18.5" fill="url(#g20b)"/>
<rect x="850" y="344" width="6" height="18.5" fill="url(#hdrleft)"/>
<rect x="850" y="345.35" width="81" height="1.1" fill="#fff" opacity="0.13"/>
</g>
<text x="861.70" y="358.80" font-size="10.7" textLength="20.10" lengthAdjust="spacingAndGlyphs" font-weight="bold" fill="#000" opacity="0.55">Lerp</text>
<text x="861.00" y="358.00" font-size="10.7" textLength="20.10" lengthAdjust="spacingAndGlyphs" font-weight="bold" fill="#d0d0d0">Lerp</text>
<path d="M919.10 352.30 L922.20 355.50 L925.30 352.30" fill="none" stroke="#fff" stroke-width="1.5" stroke-linecap="butt" stroke-linejoin="miter"/>
<path d="M866.70 374.30 L869.40 376.60 L866.70 378.90Z" fill="#333"/>
<ellipse cx="862.40" cy="376.60" rx="4.4" ry="4" fill="#3a3a3a"/>
<text x="873.70" y="380.60" font-size="9.8" textLength="6.11" lengthAdjust="spacingAndGlyphs" fill="#000" opacity="0.55">A</text>
<text x="873.00" y="379.80" font-size="9.8" textLength="6.11" lengthAdjust="spacingAndGlyphs" fill="#dadada" stroke="#dadada" stroke-width="0.28">A</text>
<path d="M866.70 397.30 L869.40 399.60 L866.70 401.90Z" fill="#333"/>
<ellipse cx="862.40" cy="399.60" rx="4.4" ry="4" fill="#3a3a3a"/>
<text x="873.70" y="403.60" font-size="9.8" textLength="6.11" lengthAdjust="spacingAndGlyphs" fill="#000" opacity="0.55">B</text>
<text x="873.00" y="402.80" font-size="9.8" textLength="6.11" lengthAdjust="spacingAndGlyphs" fill="#dadada" stroke="#dadada" stroke-width="0.28">B</text>
<path d="M866.70 420.30 L869.40 422.60 L866.70 424.90Z" fill="#333"/>
<ellipse cx="862.40" cy="422.60" rx="4.4" ry="4" fill="#3a3a3a"/>
<text x="873.70" y="426.60" font-size="9.8" textLength="23.44" lengthAdjust="spacingAndGlyphs" fill="#000" opacity="0.55">Alpha</text>
<text x="873.00" y="425.80" font-size="9.8" textLength="23.44" lengthAdjust="spacingAndGlyphs" fill="#dadada" stroke="#dadada" stroke-width="0.28">Alpha</text>
<path d="M921.00 374.40 L923.40 376.60 L921.00 378.80Z" fill="#e8e8e8" opacity="0.85"/>
<ellipse cx="916.40" cy="376.60" rx="4.45" ry="4.25" fill="#fcfcfc"/>
</g>
<g>
<rect x="945.1" y="275.6" width="82.8" height="94.3" rx="6.0" fill="none" stroke="#000" stroke-width="1.8" opacity="0.18"/>
<rect x="945.9" y="276.3" width="81.2" height="92.5" rx="5.3" fill="none" stroke="#000" stroke-width="1.3" opacity="0.3"/>
<rect x="946.675" y="276.675" width="79.65" height="90.65" rx="4.325" fill="none" stroke="#101010" stroke-opacity="0.96" stroke-width="1.35"/>
<path d="M951.00 367.45 H1022.00" stroke="#000" stroke-width="1.1" opacity="0.75"/>
<clipPath id="g21c"><rect x="946.90" y="276.90" width="79.20" height="90.20" rx="4.10"/></clipPath>
<g clip-path="url(#g21c)">
<rect x="946" y="276" width="81" height="92" fill="url(#bodyg)"/>
<linearGradient id="g21h" gradientUnits="userSpaceOnUse" x1="946" y1="0" x2="1027" y2="0"><stop offset="0" stop-color="#6e9167"/><stop offset="0.38" stop-color="#6e9167"/><stop offset="0.92" stop-color="#2a2e2a"/></linearGradient>
<linearGradient id="g21s" gradientUnits="userSpaceOnUse" x1="974.4" y1="301.0" x2="1027.0" y2="272.0"><stop offset="0" stop-color="#fff" stop-opacity="0"/><stop offset="0.45" stop-color="#fff" stop-opacity="0"/><stop offset="1" stop-color="#fff" stop-opacity="0.11"/></linearGradient>
<rect x="946" y="276" width="81" height="19.0" fill="url(#g21h)"/>
<rect x="946" y="276" width="81" height="19.0" fill="url(#g21s)"/>
<radialGradient id="g21b" gradientUnits="userSpaceOnUse" cx="0" cy="0" r="1" gradientTransform="translate(990.5 286.1) scale(40.5 6.84)"><stop offset="0" stop-color="#000" stop-opacity="0.48"/><stop offset="0.5" stop-color="#000" stop-opacity="0.336"/><stop offset="1" stop-color="#000" stop-opacity="0"/></radialGradient>
<rect x="946" y="276" width="81" height="19.0" fill="url(#g21b)"/>
<rect x="946" y="276" width="6" height="19.0" fill="url(#hdrleft)"/>
<rect x="946" y="277.35" width="81" height="1.1" fill="#fff" opacity="0.13"/>
</g>
<text x="957.70" y="291.70" font-size="10.7" textLength="29.10" lengthAdjust="spacingAndGlyphs" font-weight="bold" fill="#000" opacity="0.55">Switch</text>
<text x="957.00" y="290.90" font-size="10.7" textLength="29.10" lengthAdjust="spacingAndGlyphs" font-weight="bold" fill="#d0d0d0">Switch</text>
<path d="M1015.10 284.70 L1018.20 287.90 L1021.30 284.70" fill="none" stroke="#fff" stroke-width="1.5" stroke-linecap="butt" stroke-linejoin="miter"/>
<path d="M963.00 306.80 L965.40 309.00 L963.00 311.20Z" fill="#e8e8e8" opacity="0.85"/>
<ellipse cx="958.40" cy="309.00" rx="4.45" ry="4.25" fill="#fcfcfc"/>
<text x="969.70" y="313.00" font-size="9.8" textLength="18.50" lengthAdjust="spacingAndGlyphs" fill="#000" opacity="0.55">True</text>
<text x="969.00" y="312.20" font-size="9.8" textLength="18.50" lengthAdjust="spacingAndGlyphs" fill="#dadada" stroke="#dadada" stroke-width="0.28">True</text>
<path d="M963.00 329.80 L965.40 332.00 L963.00 334.20Z" fill="#e8e8e8" opacity="0.85"/>
<ellipse cx="958.40" cy="332.00" rx="4.45" ry="4.25" fill="#fcfcfc"/>
<text x="969.70" y="336.00" font-size="9.8" textLength="22.41" lengthAdjust="spacingAndGlyphs" fill="#000" opacity="0.55">False</text>
<text x="969.00" y="335.20" font-size="9.8" textLength="22.41" lengthAdjust="spacingAndGlyphs" fill="#dadada" stroke="#dadada" stroke-width="0.28">False</text>
<path d="M962.70 352.70 L965.40 355.00 L962.70 357.30Z" fill="#333"/>
<ellipse cx="958.40" cy="355.00" rx="4.4" ry="4" fill="#3a3a3a"/>
<text x="969.70" y="359.00" font-size="9.8" textLength="22.76" lengthAdjust="spacingAndGlyphs" fill="#000" opacity="0.55">Value</text>
<text x="969.00" y="358.20" font-size="9.8" textLength="22.76" lengthAdjust="spacingAndGlyphs" fill="#dadada" stroke="#dadada" stroke-width="0.28">Value</text>
<path d="M1017.00 306.80 L1019.40 309.00 L1017.00 311.20Z" fill="#e8e8e8" opacity="0.85"/>
<ellipse cx="1012.40" cy="309.00" rx="4.45" ry="4.25" fill="#fcfcfc"/>
</g>
<g>
<rect x="1041.1" y="275.6" width="82.8" height="94.3" rx="6.0" fill="none" stroke="#000" stroke-width="1.8" opacity="0.18"/>
<rect x="1041.9" y="276.3" width="81.2" height="92.5" rx="5.3" fill="none" stroke="#000" stroke-width="1.3" opacity="0.3"/>
<rect x="1042.675" y="276.675" width="79.65" height="90.65" rx="4.325" fill="none" stroke="#101010" stroke-opacity="0.96" stroke-width="1.35"/>
<path d="M1047.00 367.45 H1118.00" stroke="#000" stroke-width="1.1" opacity="0.75"/>
<clipPath id="g22c"><rect x="1042.90" y="276.90" width="79.20" height="90.20" rx="4.10"/></clipPath>
<g clip-path="url(#g22c)">
<rect x="1042" y="276" width="81" height="92" fill="url(#bodyg)"/>
<linearGradient id="g22h" gradientUnits="userSpaceOnUse" x1="1042" y1="0" x2="1123" y2="0"><stop offset="0" stop-color="#6e9167"/><stop offset="0.38" stop-color="#6e9167"/><stop offset="0.92" stop-color="#2a2e2a"/></linearGradient>
<linearGradient id="g22s" gradientUnits="userSpaceOnUse" x1="1070.3" y1="301.0" x2="1123.0" y2="272.0"><stop offset="0" stop-color="#fff" stop-opacity="0"/><stop offset="0.45" stop-color="#fff" stop-opacity="0"/><stop offset="1" stop-color="#fff" stop-opacity="0.11"/></linearGradient>
<rect x="1042" y="276" width="81" height="19.0" fill="url(#g22h)"/>
<rect x="1042" y="276" width="81" height="19.0" fill="url(#g22s)"/>
<radialGradient id="g22b" gradientUnits="userSpaceOnUse" cx="0" cy="0" r="1" gradientTransform="translate(1086.5 286.1) scale(40.5 6.84)"><stop offset="0" stop-color="#000" stop-opacity="0.48"/><stop offset="0.5" stop-color="#000" stop-opacity="0.336"/><stop offset="1" stop-color="#000" stop-opacity="0"/></radialGradient>
<rect x="1042" y="276" width="81" height="19.0" fill="url(#g22b)"/>
<rect x="1042" y="276" width="6" height="19.0" fill="url(#hdrleft)"/>
<rect x="1042" y="277.35" width="81" height="1.1" fill="#fff" opacity="0.13"/>
</g>
<text x="1053.70" y="291.70" font-size="10.7" textLength="29.10" lengthAdjust="spacingAndGlyphs" font-weight="bold" fill="#000" opacity="0.55">Switch</text>
<text x="1053.00" y="290.90" font-size="10.7" textLength="29.10" lengthAdjust="spacingAndGlyphs" font-weight="bold" fill="#d0d0d0">Switch</text>
<path d="M1111.10 284.70 L1114.20 287.90 L1117.30 284.70" fill="none" stroke="#fff" stroke-width="1.5" stroke-linecap="butt" stroke-linejoin="miter"/>
<path d="M1059.00 306.80 L1061.40 309.00 L1059.00 311.20Z" fill="#e8e8e8" opacity="0.85"/>
<ellipse cx="1054.40" cy="309.00" rx="4.45" ry="4.25" fill="#fcfcfc"/>
<text x="1065.70" y="313.00" font-size="9.8" textLength="18.50" lengthAdjust="spacingAndGlyphs" fill="#000" opacity="0.55">True</text>
<text x="1065.00" y="312.20" font-size="9.8" textLength="18.50" lengthAdjust="spacingAndGlyphs" fill="#dadada" stroke="#dadada" stroke-width="0.28">True</text>
<path d="M1059.00 329.80 L1061.40 332.00 L1059.00 334.20Z" fill="#e8e8e8" opacity="0.85"/>
<ellipse cx="1054.40" cy="332.00" rx="4.45" ry="4.25" fill="#fcfcfc"/>
<text x="1065.70" y="336.00" font-size="9.8" textLength="22.41" lengthAdjust="spacingAndGlyphs" fill="#000" opacity="0.55">False</text>
<text x="1065.00" y="335.20" font-size="9.8" textLength="22.41" lengthAdjust="spacingAndGlyphs" fill="#dadada" stroke="#dadada" stroke-width="0.28">False</text>
<path d="M1058.70 352.70 L1061.40 355.00 L1058.70 357.30Z" fill="#333"/>
<ellipse cx="1054.40" cy="355.00" rx="4.4" ry="4" fill="#3a3a3a"/>
<text x="1065.70" y="359.00" font-size="9.8" textLength="22.76" lengthAdjust="spacingAndGlyphs" fill="#000" opacity="0.55">Value</text>
<text x="1065.00" y="358.20" font-size="9.8" textLength="22.76" lengthAdjust="spacingAndGlyphs" fill="#dadada" stroke="#dadada" stroke-width="0.28">Value</text>
<path d="M1113.00 306.80 L1115.40 309.00 L1113.00 311.20Z" fill="#e8e8e8" opacity="0.85"/>
<ellipse cx="1108.40" cy="309.00" rx="4.45" ry="4.25" fill="#fcfcfc"/>
</g>
<g>
<rect x="1149.1" y="275.6" width="105.8" height="48.3" rx="6.0" fill="none" stroke="#000" stroke-width="1.8" opacity="0.18"/>
<rect x="1149.9" y="276.3" width="104.2" height="46.5" rx="5.3" fill="none" stroke="#000" stroke-width="1.3" opacity="0.3"/>
<rect x="1150.675" y="276.675" width="102.65" height="44.65" rx="4.325" fill="none" stroke="#101010" stroke-opacity="0.96" stroke-width="1.35"/>
<path d="M1155.00 321.45 H1249.00" stroke="#000" stroke-width="1.1" opacity="0.75"/>
<clipPath id="g23c"><rect x="1150.90" y="276.90" width="102.20" height="44.20" rx="4.10"/></clipPath>
<g clip-path="url(#g23c)">
<rect x="1150" y="276" width="104" height="46" fill="url(#bodyg)"/>
<linearGradient id="g23h" gradientUnits="userSpaceOnUse" x1="1150" y1="0" x2="1254" y2="0"><stop offset="0" stop-color="#a08a76"/><stop offset="0.38" stop-color="#a08a76"/><stop offset="0.92" stop-color="#34302d"/></linearGradient>
<linearGradient id="g23s" gradientUnits="userSpaceOnUse" x1="1186.4" y1="301.0" x2="1254.0" y2="272.0"><stop offset="0" stop-color="#fff" stop-opacity="0"/><stop offset="0.45" stop-color="#fff" stop-opacity="0"/><stop offset="1" stop-color="#fff" stop-opacity="0.11"/></linearGradient>
<rect x="1150" y="276" width="104" height="19.0" fill="url(#g23h)"/>
<rect x="1150" y="276" width="104" height="19.0" fill="url(#g23s)"/>
<radialGradient id="g23b" gradientUnits="userSpaceOnUse" cx="0" cy="0" r="1" gradientTransform="translate(1207.2 286.1) scale(52.0 6.84)"><stop offset="0" stop-color="#000" stop-opacity="0.48"/><stop offset="0.5" stop-color="#000" stop-opacity="0.336"/><stop offset="1" stop-color="#000" stop-opacity="0"/></radialGradient>
<rect x="1150" y="276" width="104" height="19.0" fill="url(#g23b)"/>
<rect x="1150" y="276" width="6" height="19.0" fill="url(#hdrleft)"/>
<rect x="1150" y="277.35" width="104" height="1.1" fill="#fff" opacity="0.13"/>
</g>
<text x="1161.70" y="291.70" font-size="10.7" textLength="66.50" lengthAdjust="spacingAndGlyphs" font-weight="bold" fill="#000" opacity="0.55">Output Normal</text>
<text x="1161.00" y="290.90" font-size="10.7" textLength="66.50" lengthAdjust="spacingAndGlyphs" font-weight="bold" fill="#d0d0d0">Output Normal</text>
<path d="M1240.70 284.70 L1243.80 287.90 L1246.90 284.70" fill="none" stroke="#fff" stroke-width="1.5" stroke-linecap="butt" stroke-linejoin="miter"/>
<path d="M1167.00 306.80 L1169.40 309.00 L1167.00 311.20Z" fill="#e8e8e8" opacity="0.85"/>
<ellipse cx="1162.40" cy="309.00" rx="4.45" ry="4.25" fill="#fcfcfc"/>
<path d="M1242.70 306.70 L1245.60 309.00 L1242.70 311.30Z" fill="#dedede"/>
<ellipse cx="1238.40" cy="309.00" rx="3.6" ry="3.3" fill="#1a1a1a" stroke="#f4f4f4" stroke-width="1.6"/>
</g>
<g>
<rect x="1149.1" y="347.6" width="87.8" height="48.3" rx="6.0" fill="none" stroke="#000" stroke-width="1.8" opacity="0.18"/>
<rect x="1149.9" y="348.3" width="86.2" height="46.5" rx="5.3" fill="none" stroke="#000" stroke-width="1.3" opacity="0.3"/>
<rect x="1150.675" y="348.675" width="84.65" height="44.65" rx="4.325" fill="none" stroke="#101010" stroke-opacity="0.96" stroke-width="1.35"/>
<path d="M1155.00 393.45 H1231.00" stroke="#000" stroke-width="1.1" opacity="0.75"/>
<clipPath id="g24c"><rect x="1150.90" y="348.90" width="84.20" height="44.20" rx="4.10"/></clipPath>
<g clip-path="url(#g24c)">
<rect x="1150" y="348" width="86" height="46" fill="url(#bodyg)"/>
<linearGradient id="g24h" gradientUnits="userSpaceOnUse" x1="1150" y1="0" x2="1236" y2="0"><stop offset="0" stop-color="#a08a76"/><stop offset="0.38" stop-color="#a08a76"/><stop offset="0.92" stop-color="#34302d"/></linearGradient>
<linearGradient id="g24s" gradientUnits="userSpaceOnUse" x1="1180.1" y1="373.0" x2="1236.0" y2="344.0"><stop offset="0" stop-color="#fff" stop-opacity="0"/><stop offset="0.45" stop-color="#fff" stop-opacity="0"/><stop offset="1" stop-color="#fff" stop-opacity="0.11"/></linearGradient>
<rect x="1150" y="348" width="86" height="19.0" fill="url(#g24h)"/>
<rect x="1150" y="348" width="86" height="19.0" fill="url(#g24s)"/>
<radialGradient id="g24b" gradientUnits="userSpaceOnUse" cx="0" cy="0" r="1" gradientTransform="translate(1197.3 358.1) scale(43.0 6.84)"><stop offset="0" stop-color="#000" stop-opacity="0.48"/><stop offset="0.5" stop-color="#000" stop-opacity="0.336"/><stop offset="1" stop-color="#000" stop-opacity="0"/></radialGradient>
<rect x="1150" y="348" width="86" height="19.0" fill="url(#g24b)"/>
<rect x="1150" y="348" width="6" height="19.0" fill="url(#hdrleft)"/>
<rect x="1150" y="349.35" width="86" height="1.1" fill="#fff" opacity="0.13"/>
</g>
<text x="1161.70" y="363.70" font-size="10.7" textLength="48.60" lengthAdjust="spacingAndGlyphs" font-weight="bold" fill="#000" opacity="0.55">Output ----</text>
<text x="1161.00" y="362.90" font-size="10.7" textLength="48.60" lengthAdjust="spacingAndGlyphs" font-weight="bold" fill="#d0d0d0">Output ----</text>
<path d="M1222.70 356.70 L1225.80 359.90 L1228.90 356.70" fill="none" stroke="#fff" stroke-width="1.5" stroke-linecap="butt" stroke-linejoin="miter"/>
<path d="M1166.70 378.70 L1169.60 381.00 L1166.70 383.30Z" fill="#dedede"/>
<ellipse cx="1162.40" cy="381.00" rx="3.6" ry="3.3" fill="#1a1a1a" stroke="#f4f4f4" stroke-width="1.6"/>
<path d="M1224.70 378.70 L1227.60 381.00 L1224.70 383.30Z" fill="#dedede"/>
<ellipse cx="1220.40" cy="381.00" rx="3.6" ry="3.3" fill="#1a1a1a" stroke="#f4f4f4" stroke-width="1.6"/>
</g>
<g>
<rect x="357.1" y="376.6" width="105.8" height="51.3" rx="6.0" fill="none" stroke="#000" stroke-width="1.8" opacity="0.18"/>
<rect x="357.9" y="377.3" width="104.2" height="49.5" rx="5.3" fill="none" stroke="#000" stroke-width="1.3" opacity="0.3"/>
<rect x="358.675" y="377.675" width="102.65" height="47.65" rx="4.325" fill="none" stroke="#101010" stroke-opacity="0.96" stroke-width="1.35"/>
<path d="M363.00 425.45 H457.00" stroke="#000" stroke-width="1.1" opacity="0.75"/>
<clipPath id="g25c"><rect x="358.90" y="377.90" width="102.20" height="47.20" rx="4.10"/></clipPath>
<g clip-path="url(#g25c)">
<rect x="358" y="377" width="104" height="49" fill="url(#bodyg)"/>
<linearGradient id="g25h" gradientUnits="userSpaceOnUse" x1="358" y1="0" x2="462" y2="0"><stop offset="0" stop-color="#70a23e"/><stop offset="0.38" stop-color="#70a23e"/><stop offset="0.92" stop-color="#2a3026"/></linearGradient>
<linearGradient id="g25s" gradientUnits="userSpaceOnUse" x1="394.4" y1="400.6" x2="462.0" y2="373.0"><stop offset="0" stop-color="#fff" stop-opacity="0"/><stop offset="0.45" stop-color="#fff" stop-opacity="0"/><stop offset="1" stop-color="#fff" stop-opacity="0.11"/></linearGradient>
<rect x="358" y="377" width="104" height="17.6" fill="url(#g25h)"/>
<rect x="358" y="377" width="104" height="17.6" fill="url(#g25s)"/>
<radialGradient id="g25b" gradientUnits="userSpaceOnUse" cx="0" cy="0" r="1" gradientTransform="translate(415.2 386.4) scale(52.0 6.34)"><stop offset="0" stop-color="#000" stop-opacity="0.48"/><stop offset="0.5" stop-color="#000" stop-opacity="0.336"/><stop offset="1" stop-color="#000" stop-opacity="0"/></radialGradient>
<rect x="358" y="377" width="104" height="17.6" fill="url(#g25b)"/>
<rect x="358" y="377" width="6" height="17.6" fill="url(#hdrleft)"/>
<rect x="358" y="378.35" width="104" height="1.1" fill="#fff" opacity="0.13"/>
</g>
<text x="369.70" y="391.50" font-size="10.7" textLength="5.30" lengthAdjust="spacingAndGlyphs" font-weight="bold" fill="#000" opacity="0.55">0</text>
<text x="369.00" y="390.70" font-size="10.7" textLength="5.30" lengthAdjust="spacingAndGlyphs" font-weight="bold" fill="#d0d0d0">0</text>
<path d="M448.70 384.20 L451.80 387.40 L454.90 384.20" fill="none" stroke="#fff" stroke-width="1.5" stroke-linecap="butt" stroke-linejoin="miter"/>
<path d="M452.00 406.80 L454.40 409.00 L452.00 411.20Z" fill="#e8e8e8" opacity="0.85"/>
<ellipse cx="447.40" cy="409.00" rx="4.45" ry="4.25" fill="#fcfcfc"/>
<text x="381.70" y="415.80" font-size="9.8" textLength="22.76" lengthAdjust="spacingAndGlyphs" fill="#000" opacity="0.55">Value</text>
<text x="381.00" y="415.00" font-size="9.8" textLength="22.76" lengthAdjust="spacingAndGlyphs" fill="#dadada" stroke="#dadada" stroke-width="0.28">Value</text>
<rect x="408.6" y="404.3" width="22.2" height="13.8" fill="#1a1c1b" stroke="#949494" stroke-width="0.9"/>
<text x="412.20" y="415.20" font-size="10.4" textLength="14.60" lengthAdjust="spacingAndGlyphs" fill="#b4b4b4" stroke="#b4b4b4" stroke-width="0.01">0.0</text>
</g>
<g>
<rect x="45.1" y="407.6" width="115.8" height="59.599999999999994" rx="6.0" fill="none" stroke="#000" stroke-width="1.8" opacity="0.18"/>
<rect x="45.9" y="408.3" width="114.2" height="57.8" rx="5.3" fill="none" stroke="#000" stroke-width="1.3" opacity="0.3"/>
<rect x="46.675" y="408.675" width="112.65" height="55.949999999999996" rx="4.325" fill="none" stroke="#101010" stroke-opacity="0.96" stroke-width="1.35"/>
<path d="M51.00 464.75 H155.00" stroke="#000" stroke-width="1.1" opacity="0.75"/>
<clipPath id="g26c"><rect x="46.90" y="408.90" width="112.20" height="55.50" rx="4.10"/></clipPath>
<g clip-path="url(#g26c)">
<rect x="46" y="408" width="114" height="57.3" fill="url(#bodyg)"/>
<linearGradient id="g26h" gradientUnits="userSpaceOnUse" x1="46" y1="0" x2="160" y2="0"><stop offset="0" stop-color="#a61e1e"/><stop offset="0.38" stop-color="#a61e1e"/><stop offset="0.92" stop-color="#2f2828"/></linearGradient>
<linearGradient id="g26s" gradientUnits="userSpaceOnUse" x1="85.9" y1="445.0" x2="160.0" y2="404.0"><stop offset="0" stop-color="#fff" stop-opacity="0"/><stop offset="0.45" stop-color="#fff" stop-opacity="0"/><stop offset="1" stop-color="#fff" stop-opacity="0.11"/></linearGradient>
<rect x="46" y="408" width="114" height="31" fill="url(#g26h)"/>
<rect x="46" y="408" width="114" height="31" fill="url(#g26s)"/>
<radialGradient id="g26b" gradientUnits="userSpaceOnUse" cx="0" cy="0" r="1" gradientTransform="translate(108.7 424.1) scale(57.0 11.16)"><stop offset="0" stop-color="#000" stop-opacity="0.48"/><stop offset="0.5" stop-color="#000" stop-opacity="0.336"/><stop offset="1" stop-color="#000" stop-opacity="0"/></radialGradient>
<rect x="46" y="408" width="114" height="31" fill="url(#g26b)"/>
<rect x="46" y="408" width="6" height="31" fill="url(#hdrleft)"/>
<rect x="46" y="409.35" width="114" height="1.1" fill="#fff" opacity="0.13"/>
</g>
<text x="57.70" y="423.20" font-size="10.7" textLength="76.60" lengthAdjust="spacingAndGlyphs" font-weight="bold" fill="#000" opacity="0.55">VertexNormalWS</text>
<text x="57.00" y="422.40" font-size="10.7" textLength="76.60" lengthAdjust="spacingAndGlyphs" font-weight="bold" fill="#d0d0d0">VertexNormalWS</text>
<text x="57.00" y="435.30" font-size="9.2" textLength="41.60" lengthAdjust="spacingAndGlyphs" font-style="italic" fill="#c88e6c">Input Data</text>
<path d="M146.70 422.60 L149.80 425.80 L152.90 422.60" fill="none" stroke="#fff" stroke-width="1.5" stroke-linecap="butt" stroke-linejoin="miter"/>
<path d="M149.00 450.80 L151.40 453.00 L149.00 455.20Z" fill="#e8e8e8" opacity="0.85"/>
<ellipse cx="144.40" cy="453.00" rx="4.45" ry="4.25" fill="#fcfcfc"/>
</g>
<g>
<rect x="177.1" y="419.6" width="179.8" height="48.3" rx="6.0" fill="none" stroke="#000" stroke-width="1.8" opacity="0.18"/>
<rect x="177.9" y="420.3" width="178.2" height="46.5" rx="5.3" fill="none" stroke="#000" stroke-width="1.3" opacity="0.3"/>
<rect x="178.675" y="420.675" width="176.65" height="44.65" rx="4.325" fill="none" stroke="#101010" stroke-opacity="0.96" stroke-width="1.35"/>
<path d="M183.00 465.45 H351.00" stroke="#000" stroke-width="1.1" opacity="0.75"/>
<clipPath id="g27c"><rect x="178.90" y="420.90" width="176.20" height="44.20" rx="4.10"/></clipPath>
<g clip-path="url(#g27c)">
<rect x="178" y="420" width="178" height="46" fill="url(#bodyg)"/>
<linearGradient id="g27h" gradientUnits="userSpaceOnUse" x1="178" y1="0" x2="356" y2="0"><stop offset="0" stop-color="#a61e1e"/><stop offset="0.38" stop-color="#a61e1e"/><stop offset="0.92" stop-color="#2f2828"/></linearGradient>
<linearGradient id="g27s" gradientUnits="userSpaceOnUse" x1="240.3" y1="445.0" x2="356.0" y2="416.0"><stop offset="0" stop-color="#fff" stop-opacity="0"/><stop offset="0.45" stop-color="#fff" stop-opacity="0"/><stop offset="1" stop-color="#fff" stop-opacity="0.11"/></linearGradient>
<rect x="178" y="420" width="178" height="19.0" fill="url(#g27h)"/>
<rect x="178" y="420" width="178" height="19.0" fill="url(#g27s)"/>
<radialGradient id="g27b" gradientUnits="userSpaceOnUse" cx="0" cy="0" r="1" gradientTransform="translate(275.9 430.1) scale(89.0 6.84)"><stop offset="0" stop-color="#000" stop-opacity="0.32"/><stop offset="0.5" stop-color="#000" stop-opacity="0.224"/><stop offset="1" stop-color="#000" stop-opacity="0"/></radialGradient>
<rect x="178" y="420" width="178" height="19.0" fill="url(#g27b)"/>
<rect x="178" y="420" width="6" height="19.0" fill="url(#hdrleft)"/>
<rect x="178" y="421.35" width="178" height="1.1" fill="#fff" opacity="0.13"/>
</g>
<text x="189.70" y="435.70" font-size="10.7" textLength="141.00" lengthAdjust="spacingAndGlyphs" font-weight="bold" fill="#000" opacity="0.55">Input Global - Normal (Vector3)</text>
<text x="189.00" y="434.90" font-size="10.7" textLength="141.00" lengthAdjust="spacingAndGlyphs" font-weight="bold" fill="#d0d0d0">Input Global - Normal (Vector3)</text>
<path d="M342.70 428.70 L345.80 431.90 L348.90 428.70" fill="none" stroke="#fff" stroke-width="1.5" stroke-linecap="butt" stroke-linejoin="miter"/>
<path d="M194.70 450.70 L197.40 453.00 L194.70 455.30Z" fill="#333"/>
<ellipse cx="190.40" cy="453.00" rx="4.4" ry="4" fill="#3a3a3a"/>
<text x="201.70" y="457.00" font-size="9.8" textLength="32.59" lengthAdjust="spacingAndGlyphs" fill="#000" opacity="0.55">Preview</text>
<text x="201.00" y="456.20" font-size="9.8" textLength="32.59" lengthAdjust="spacingAndGlyphs" fill="#dadada" stroke="#dadada" stroke-width="0.28">Preview</text>
<path d="M345.00 450.80 L347.40 453.00 L345.00 455.20Z" fill="#e8e8e8" opacity="0.85"/>
<ellipse cx="340.40" cy="453.00" rx="4.45" ry="4.25" fill="#fcfcfc"/>
</g>
<g>
<rect x="357.1" y="419.6" width="92.8" height="48.3" rx="6.0" fill="none" stroke="#000" stroke-width="1.8" opacity="0.18"/>
<rect x="357.9" y="420.3" width="91.2" height="46.5" rx="5.3" fill="none" stroke="#000" stroke-width="1.3" opacity="0.3"/>
<rect x="358.675" y="420.675" width="89.65" height="44.65" rx="4.325" fill="none" stroke="#101010" stroke-opacity="0.96" stroke-width="1.35"/>
<path d="M363.00 465.45 H444.00" stroke="#000" stroke-width="1.1" opacity="0.75"/>
<clipPath id="g28c"><rect x="358.90" y="420.90" width="89.20" height="44.20" rx="4.10"/></clipPath>
<g clip-path="url(#g28c)">
<rect x="358" y="420" width="91" height="46" fill="url(#bodyg)"/>
<linearGradient id="g28h" gradientUnits="userSpaceOnUse" x1="358" y1="0" x2="449" y2="0"><stop offset="0" stop-color="#a81f52"/><stop offset="0.38" stop-color="#a81f52"/><stop offset="0.92" stop-color="#2f282b"/></linearGradient>
<linearGradient id="g28s" gradientUnits="userSpaceOnUse" x1="389.9" y1="445.0" x2="449.0" y2="416.0"><stop offset="0" stop-color="#fff" stop-opacity="0"/><stop offset="0.45" stop-color="#fff" stop-opacity="0"/><stop offset="1" stop-color="#fff" stop-opacity="0.11"/></linearGradient>
<rect x="358" y="420" width="91" height="19.0" fill="url(#g28h)"/>
<rect x="358" y="420" width="91" height="19.0" fill="url(#g28s)"/>
<radialGradient id="g28b" gradientUnits="userSpaceOnUse" cx="0" cy="0" r="1" gradientTransform="translate(408.1 430.1) scale(45.5 6.84)"><stop offset="0" stop-color="#000" stop-opacity="0.48"/><stop offset="0.5" stop-color="#000" stop-opacity="0.336"/><stop offset="1" stop-color="#000" stop-opacity="0"/></radialGradient>
<rect x="358" y="420" width="91" height="19.0" fill="url(#g28b)"/>
<rect x="358" y="420" width="6" height="19.0" fill="url(#hdrleft)"/>
<rect x="358" y="421.35" width="91" height="1.1" fill="#fff" opacity="0.13"/>
</g>
<text x="369.70" y="435.70" font-size="10.7" textLength="53.60" lengthAdjust="spacingAndGlyphs" font-weight="bold" fill="#000" opacity="0.55">WSNormals</text>
<text x="369.00" y="434.90" font-size="10.7" textLength="53.60" lengthAdjust="spacingAndGlyphs" font-weight="bold" fill="#d0d0d0">WSNormals</text>
<path d="M435.70 428.70 L438.80 431.90 L441.90 428.70" fill="none" stroke="#fff" stroke-width="1.5" stroke-linecap="butt" stroke-linejoin="miter"/>
<path d="M375.00 450.80 L377.40 453.00 L375.00 455.20Z" fill="#e8e8e8" opacity="0.85"/>
<ellipse cx="370.40" cy="453.00" rx="4.45" ry="4.25" fill="#fcfcfc"/>
<path d="M438.00 450.80 L440.40 453.00 L438.00 455.20Z" fill="#e8e8e8" opacity="0.85"/>
<ellipse cx="433.40" cy="453.00" rx="4.45" ry="4.25" fill="#fcfcfc"/>
</g>
<g>
<rect x="645.1" y="399.8" width="65.8" height="70.3" rx="6.0" fill="none" stroke="#000" stroke-width="1.8" opacity="0.18"/>
<rect x="645.9" y="400.5" width="64.2" height="68.5" rx="5.3" fill="none" stroke="#000" stroke-width="1.3" opacity="0.3"/>
<rect x="646.675" y="400.875" width="62.65" height="66.65" rx="4.325" fill="none" stroke="#101010" stroke-opacity="0.96" stroke-width="1.35"/>
<path d="M651.00 467.65 H705.00" stroke="#000" stroke-width="1.1" opacity="0.75"/>
<clipPath id="g29c"><rect x="646.90" y="401.10" width="62.20" height="66.20" rx="4.10"/></clipPath>
<g clip-path="url(#g29c)">
<rect x="646" y="400.2" width="64" height="68" fill="url(#bodyg)"/>
<linearGradient id="g29h" gradientUnits="userSpaceOnUse" x1="646" y1="0" x2="710" y2="0"><stop offset="0" stop-color="#6e9167"/><stop offset="0.38" stop-color="#6e9167"/><stop offset="0.92" stop-color="#2a2e2a"/></linearGradient>
<linearGradient id="g29s" gradientUnits="userSpaceOnUse" x1="668.4" y1="424.7" x2="710.0" y2="396.2"><stop offset="0" stop-color="#fff" stop-opacity="0"/><stop offset="0.45" stop-color="#fff" stop-opacity="0"/><stop offset="1" stop-color="#fff" stop-opacity="0.11"/></linearGradient>
<rect x="646" y="400.2" width="64" height="18.5" fill="url(#g29h)"/>
<rect x="646" y="400.2" width="64" height="18.5" fill="url(#g29s)"/>
<radialGradient id="g29b" gradientUnits="userSpaceOnUse" cx="0" cy="0" r="1" gradientTransform="translate(681.2 410.1) scale(32.0 6.66)"><stop offset="0" stop-color="#000" stop-opacity="0.48"/><stop offset="0.5" stop-color="#000" stop-opacity="0.336"/><stop offset="1" stop-color="#000" stop-opacity="0"/></radialGradient>
<rect x="646" y="400.2" width="64" height="18.5" fill="url(#g29b)"/>
<rect x="646" y="400.2" width="6" height="18.5" fill="url(#hdrleft)"/>
<rect x="646" y="401.55" width="64" height="1.1" fill="#fff" opacity="0.13"/>
</g>
<text x="657.10" y="414.20" font-size="10.7" textLength="17.50" lengthAdjust="spacingAndGlyphs" font-weight="bold" fill="#000" opacity="0.55">Add</text>
<text x="656.40" y="413.40" font-size="10.7" textLength="17.50" lengthAdjust="spacingAndGlyphs" font-weight="bold" fill="#d0d0d0">Add</text>
<path d="M698.10 407.90 L701.20 411.10 L704.30 407.90" fill="none" stroke="#fff" stroke-width="1.5" stroke-linecap="butt" stroke-linejoin="miter"/>
<path d="M662.70 430.20 L665.40 432.50 L662.70 434.80Z" fill="#333"/>
<ellipse cx="658.40" cy="432.50" rx="4.4" ry="4" fill="#3a3a3a"/>
<text x="669.70" y="436.50" font-size="9.8" textLength="6.11" lengthAdjust="spacingAndGlyphs" fill="#000" opacity="0.55">A</text>
<text x="669.00" y="435.70" font-size="9.8" textLength="6.11" lengthAdjust="spacingAndGlyphs" fill="#dadada" stroke="#dadada" stroke-width="0.28">A</text>
<path d="M662.70 453.20 L665.40 455.50 L662.70 457.80Z" fill="#333"/>
<ellipse cx="658.40" cy="455.50" rx="4.4" ry="4" fill="#3a3a3a"/>
<text x="669.70" y="459.50" font-size="9.8" textLength="6.11" lengthAdjust="spacingAndGlyphs" fill="#000" opacity="0.55">B</text>
<text x="669.00" y="458.70" font-size="9.8" textLength="6.11" lengthAdjust="spacingAndGlyphs" fill="#dadada" stroke="#dadada" stroke-width="0.28">B</text>
<path d="M700.00 430.30 L702.40 432.50 L700.00 434.70Z" fill="#e8e8e8" opacity="0.85"/>
<ellipse cx="695.40" cy="432.50" rx="4.45" ry="4.25" fill="#fcfcfc"/>
</g>
<g>
<rect x="585.1" y="479.6" width="115.8" height="62.3" rx="6.0" fill="none" stroke="#000" stroke-width="1.8" opacity="0.18"/>
<rect x="585.9" y="480.3" width="114.2" height="60.5" rx="5.3" fill="none" stroke="#000" stroke-width="1.3" opacity="0.3"/>
<rect x="586.675" y="480.675" width="112.65" height="58.65" rx="4.325" fill="none" stroke="#101010" stroke-opacity="0.96" stroke-width="1.35"/>
<path d="M591.00 539.45 H695.00" stroke="#000" stroke-width="1.1" opacity="0.75"/>
<clipPath id="g30c"><rect x="586.90" y="480.90" width="112.20" height="58.20" rx="4.10"/></clipPath>
<g clip-path="url(#g30c)">
<rect x="586" y="480" width="114" height="60" fill="url(#bodyg)"/>
<linearGradient id="g30h" gradientUnits="userSpaceOnUse" x1="586" y1="0" x2="700" y2="0"><stop offset="0" stop-color="#741f22"/><stop offset="0.38" stop-color="#741f22"/><stop offset="0.92" stop-color="#2f2828"/></linearGradient>
<linearGradient id="g30s" gradientUnits="userSpaceOnUse" x1="625.9" y1="517.0" x2="700.0" y2="476.0"><stop offset="0" stop-color="#fff" stop-opacity="0"/><stop offset="0.45" stop-color="#fff" stop-opacity="0"/><stop offset="1" stop-color="#fff" stop-opacity="0.11"/></linearGradient>
<rect x="586" y="480" width="114" height="31" fill="url(#g30h)"/>
<rect x="586" y="480" width="114" height="31" fill="url(#g30s)"/>
<radialGradient id="g30b" gradientUnits="userSpaceOnUse" cx="0" cy="0" r="1" gradientTransform="translate(648.7 496.1) scale(57.0 11.16)"><stop offset="0" stop-color="#000" stop-opacity="0.48"/><stop offset="0.5" stop-color="#000" stop-opacity="0.336"/><stop offset="1" stop-color="#000" stop-opacity="0"/></radialGradient>
<rect x="586" y="480" width="114" height="31" fill="url(#g30b)"/>
<rect x="586" y="480" width="6" height="31" fill="url(#hdrleft)"/>
<rect x="586" y="481.35" width="114" height="1.1" fill="#fff" opacity="0.13"/>
</g>
<text x="597.70" y="495.20" font-size="10.7" textLength="76.30" lengthAdjust="spacingAndGlyphs" font-weight="bold" fill="#000" opacity="0.55">Static Bool (True)</text>
<text x="597.00" y="494.40" font-size="10.7" textLength="76.30" lengthAdjust="spacingAndGlyphs" font-weight="bold" fill="#d0d0d0">Static Bool (True)</text>
<text x="597.00" y="507.30" font-size="9.2" textLength="41.60" lengthAdjust="spacingAndGlyphs" font-style="italic" fill="#c88e6c">Input Data</text>
<path d="M689.00 522.60 L691.40 524.80 L689.00 527.00Z" fill="#e8e8e8" opacity="0.85"/>
<ellipse cx="684.40" cy="524.80" rx="4.45" ry="4.25" fill="#fcfcfc"/>
<text x="609.70" y="530.10" font-size="9.8" textLength="22.76" lengthAdjust="spacingAndGlyphs" fill="#000" opacity="0.55">Value</text>
<text x="609.00" y="529.30" font-size="9.8" textLength="22.76" lengthAdjust="spacingAndGlyphs" fill="#dadada" stroke="#dadada" stroke-width="0.28">Value</text>
<rect x="636.5" y="519.5" width="13" height="13" fill="#0c0c10" stroke="#3c3c3c" stroke-width="1"/>
<path d="M639.5 526 l2.6 2.8 l5 -5.6" fill="none" stroke="#2d8ceb" stroke-width="1.7"/>
</g>
<g>
<rect x="717.1" y="491.6" width="223.8" height="48.3" rx="6.0" fill="none" stroke="#000" stroke-width="1.8" opacity="0.18"/>
<rect x="717.9" y="492.3" width="222.2" height="46.5" rx="5.3" fill="none" stroke="#000" stroke-width="1.3" opacity="0.3"/>
<rect x="718.675" y="492.675" width="220.65" height="44.65" rx="4.325" fill="none" stroke="#101010" stroke-opacity="0.96" stroke-width="1.35"/>
<path d="M723.00 537.45 H935.00" stroke="#000" stroke-width="1.1" opacity="0.75"/>
<clipPath id="g31c"><rect x="718.90" y="492.90" width="220.20" height="44.20" rx="4.10"/></clipPath>
<g clip-path="url(#g31c)">
<rect x="718" y="492" width="222" height="46" fill="url(#bodyg)"/>
<linearGradient id="g31h" gradientUnits="userSpaceOnUse" x1="718" y1="0" x2="940" y2="0"><stop offset="0" stop-color="#a61e1e"/><stop offset="0.38" stop-color="#a61e1e"/><stop offset="0.92" stop-color="#2f2828"/></linearGradient>
<linearGradient id="g31s" gradientUnits="userSpaceOnUse" x1="795.7" y1="517.0" x2="940.0" y2="488.0"><stop offset="0" stop-color="#fff" stop-opacity="0"/><stop offset="0.45" stop-color="#fff" stop-opacity="0"/><stop offset="1" stop-color="#fff" stop-opacity="0.11"/></linearGradient>
<rect x="718" y="492" width="222" height="19.0" fill="url(#g31h)"/>
<rect x="718" y="492" width="222" height="19.0" fill="url(#g31s)"/>
<radialGradient id="g31b" gradientUnits="userSpaceOnUse" cx="0" cy="0" r="1" gradientTransform="translate(840.1 502.1) scale(111.0 6.84)"><stop offset="0" stop-color="#000" stop-opacity="0.32"/><stop offset="0.5" stop-color="#000" stop-opacity="0.224"/><stop offset="1" stop-color="#000" stop-opacity="0"/></radialGradient>
<rect x="718" y="492" width="222" height="19.0" fill="url(#g31b)"/>
<rect x="718" y="492" width="6" height="19.0" fill="url(#hdrleft)"/>
<rect x="718" y="493.35" width="222" height="1.1" fill="#fff" opacity="0.13"/>
</g>
<text x="729.70" y="507.70" font-size="10.7" textLength="185.00" lengthAdjust="spacingAndGlyphs" font-weight="bold" fill="#000" opacity="0.55">Input Global - Enable Normal (StaticBool)</text>
<text x="729.00" y="506.90" font-size="10.7" textLength="185.00" lengthAdjust="spacingAndGlyphs" font-weight="bold" fill="#d0d0d0">Input Global - Enable Normal (StaticBool)</text>
<path d="M926.70 500.70 L929.80 503.90 L932.90 500.70" fill="none" stroke="#fff" stroke-width="1.5" stroke-linecap="butt" stroke-linejoin="miter"/>
<path d="M734.70 522.70 L737.40 525.00 L734.70 527.30Z" fill="#333"/>
<ellipse cx="730.40" cy="525.00" rx="4.4" ry="4" fill="#3a3a3a"/>
<text x="741.70" y="529.00" font-size="9.8" textLength="32.59" lengthAdjust="spacingAndGlyphs" fill="#000" opacity="0.55">Preview</text>
<text x="741.00" y="528.20" font-size="9.8" textLength="32.59" lengthAdjust="spacingAndGlyphs" fill="#dadada" stroke="#dadada" stroke-width="0.28">Preview</text>
<path d="M929.00 522.80 L931.40 525.00 L929.00 527.20Z" fill="#e8e8e8" opacity="0.85"/>
<ellipse cx="924.40" cy="525.00" rx="4.45" ry="4.25" fill="#fcfcfc"/>
</g>
<path d="M1474.6 561.8 L1484 553.2 M1477.8 561.8 L1484 556.2 M1481 561.8 L1484 559" stroke="#f2f2f2" stroke-width="1.35" fill="none"/>
</g></svg></body></html>
